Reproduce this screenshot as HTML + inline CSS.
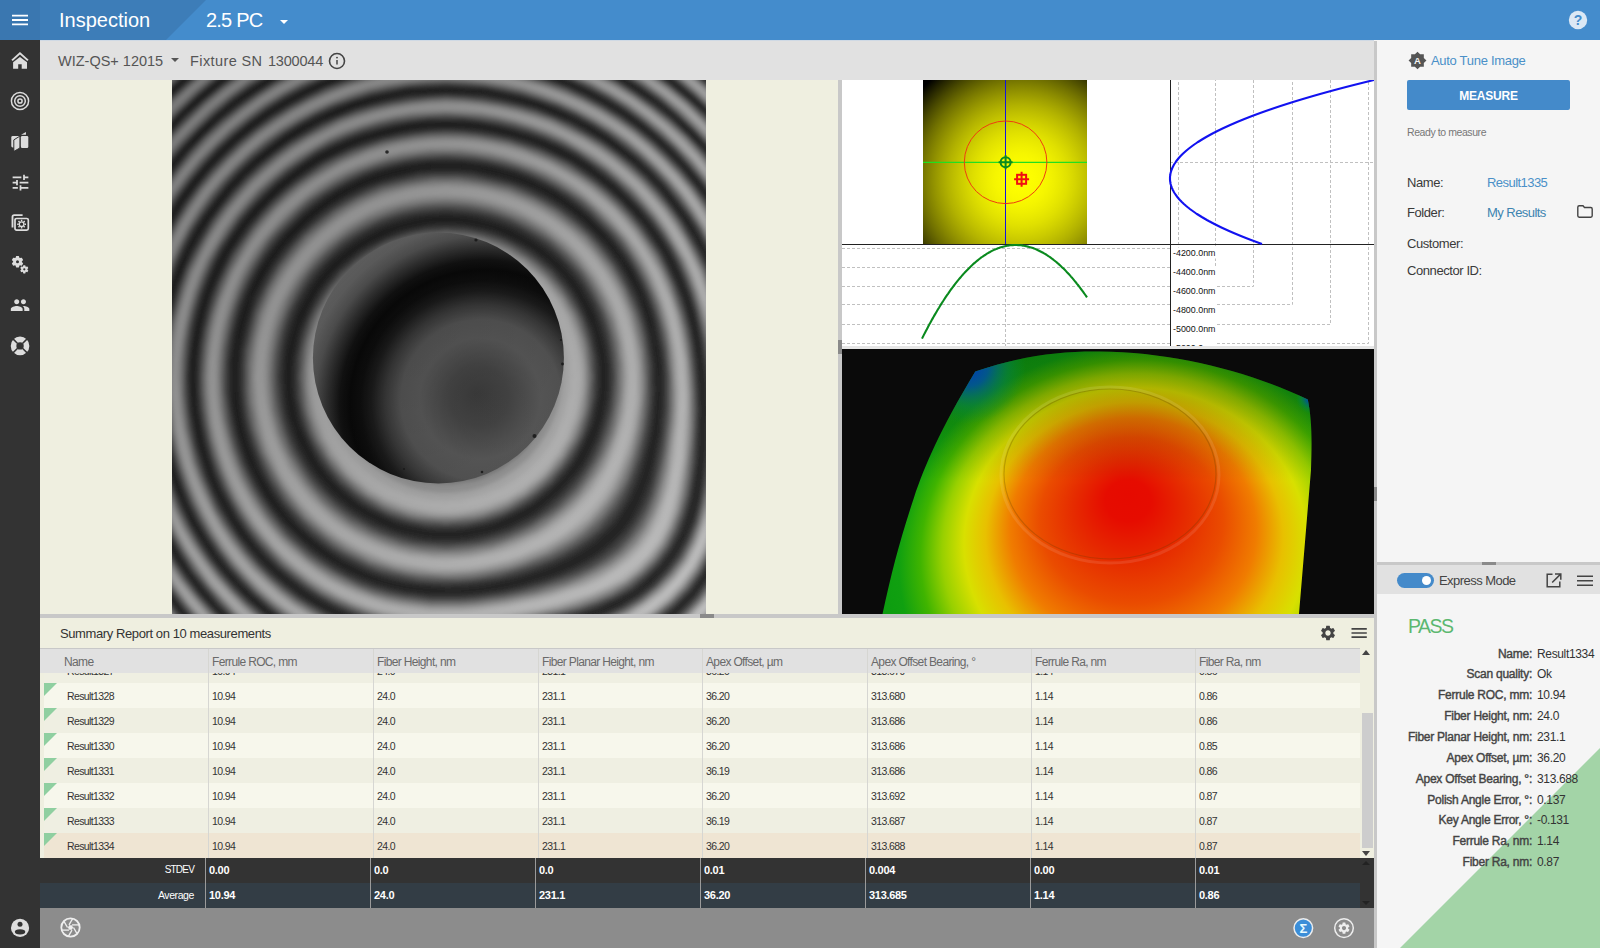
<!DOCTYPE html>
<html lang="en">
<head>
<meta charset="utf-8">
<title>Inspection</title>
<style>
*{box-sizing:border-box;margin:0;padding:0}
html,body{width:1600px;height:948px;overflow:hidden;background:#f5f5f5;font-family:"Liberation Sans",sans-serif;color:#333}
.abs{position:absolute}
.t{position:absolute;white-space:nowrap;line-height:1}
#topbar{position:absolute;left:0;top:0;width:1600px;height:40px;background:#448ccc}
#topbar .dark{position:absolute;left:0;top:0;width:206px;height:40px;background:#3d7db8;clip-path:polygon(0 0,206px 0,166px 40px,0 40px)}
#topbar .burger{position:absolute;left:0;top:0;width:40px;height:40px;background:#3a77b0}
#sidebar{position:absolute;left:0;top:40px;width:40px;height:908px;background:#333}
#toolbar{position:absolute;left:40px;top:40px;width:1334px;height:40px;background:#e1e1e1;border-top:1px solid #cfd9e4}
#leftpane{position:absolute;left:40px;top:80px;width:798px;height:534px;background:#efefe0}
#vsplit1{position:absolute;left:838px;top:80px;width:4px;height:534px;background:#c8c8c8}
#plots{position:absolute;left:842px;top:80px;width:532px;height:266px;background:#fff;overflow:hidden}
#strip{position:absolute;left:842px;top:346px;width:532px;height:3px;background:#e6e6e6}
#view3d{position:absolute;left:842px;top:349px;width:532px;height:265px;background:#0a0a0a;overflow:hidden}
#hsplit1{position:absolute;left:40px;top:614px;width:1334px;height:4px;background:#c8c8c8}
#summary{position:absolute;left:40px;top:618px;width:1334px;height:290px;background:#efefe0;overflow:hidden}
#bottombar{position:absolute;left:40px;top:908px;width:1334px;height:40px;background:#8c8c8c}
#vsplit2{position:absolute;left:1374px;top:41px;width:3px;height:907px;background:#c8c8c8}
#right{position:absolute;left:1377px;top:41px;width:223px;height:907px;background:#f5f5f5;overflow:hidden}
svg{position:absolute;overflow:visible}
.ico{fill:#ddd}
/* table */
.hdr{position:absolute;left:0;top:30px;width:1320px;height:25px;background:#e1e1e1;border-top:1px solid #c8c8c8;z-index:3}
.hdr span{position:absolute;top:7px;font-size:12px;color:#6a6a6a;white-space:nowrap;line-height:1;letter-spacing:-0.65px}
.row{position:absolute;left:4px;width:1316px;height:25px}
.row span{position:absolute;top:8px;font-size:10.5px;color:#333;white-space:nowrap;line-height:1;letter-spacing:-0.62px}
.row i{position:absolute;left:0;top:0;width:0;height:0;border-top:13px solid #8fcfa0;border-right:13px solid transparent}
.ra{background:#f7f7ec}.rb{background:#efefe2}.rs{background:#efe5d3}
.vsep{position:absolute;top:31px;width:1px;height:209px;background:#d6d6d2;z-index:4}
.drow{position:absolute;left:0;width:1334px;height:25px;background:#333}
.drow span{position:absolute;top:7px;font-size:11px;color:#fff;white-space:nowrap;line-height:1}
.drow b{position:absolute;top:7px;font-size:11px;color:#fff;white-space:nowrap;line-height:1;font-weight:bold;letter-spacing:-0.3px}
.dsep{position:absolute;top:240px;width:1px;height:50px;background:#9a9a9a;z-index:4}
/* right */
.lbl{position:absolute;left:30px;font-size:13px;color:#3a3a3a;line-height:1;white-space:nowrap;letter-spacing:-0.42px}
.val{position:absolute;left:110px;font-size:13px;color:#4a90c8;line-height:1;white-space:nowrap;letter-spacing:-0.55px}
.rl{position:absolute;right:68px;font-size:12px;font-weight:normal;-webkit-text-stroke:0.4px #444;color:#444;line-height:1;white-space:nowrap;letter-spacing:-0.25px;z-index:2}
.rv{position:absolute;left:160px;font-size:12px;color:#333;line-height:1;white-space:nowrap;letter-spacing:-0.35px;z-index:2}
</style>
</head>
<body>
<div id="topbar">
  <div class="dark"></div>
  <div class="burger"></div>
  <svg style="left:12px;top:14px" width="16" height="12" viewBox="0 0 16 12"><path d="M0 1.600h16M0 6h16M0 10.400h16" stroke="#fff" stroke-width="1.900" fill="none"/></svg>
  <div class="t" id="tt1" style="left:59px;top:10px;font-size:20px;color:#fff;letter-spacing:0px">Inspection</div>
  <div class="t" id="tt2" style="left:206px;top:10px;font-size:20px;color:#fff;letter-spacing:-0.8px">2.5 PC</div>
  <svg style="left:279.500px;top:20px" width="8" height="4" viewBox="0 0 8 4"><path d="M0 0h8l-4 4z" fill="#fff"/></svg>
  <svg style="left:1568px;top:10px" width="20" height="20" viewBox="0 0 20 20"><circle cx="10" cy="10" r="9.2" fill="#dbe8f5"/><text x="10" y="15" text-anchor="middle" font-family="Liberation Sans, sans-serif" font-weight="bold" font-size="14" fill="#448ccc">?</text></svg>
</div>
<div id="sidebar">
  <!-- home (center y=60 => local 20) -->
  <svg style="left:10px;top:10px" width="20" height="20" viewBox="0 0 20 20" class="ico"><path d="M9.950 1.900 18.600 9.700 17.300 11.100 9.950 4.600 2.700 11.100 1.400 9.700z"/><path d="M9.950 6.900 17 12.300V18.700H11.700V14.300H8.200V18.700H3.100V12.300z"/></svg>
  <!-- target center y=101 => local 61 -->
  <svg style="left:10px;top:51px" width="20" height="20" viewBox="0 0 20 20" fill="none" stroke="#ddd"><circle cx="10" cy="10" r="8.6" stroke-width="1.5"/><circle cx="10" cy="10" r="5.3" stroke-width="1.5"/><circle cx="10" cy="10" r="2.1" stroke-width="1.5"/></svg>
  <!-- book/map center y=141.5 -->
  <svg style="left:10px;top:91px" width="20" height="21" viewBox="0 0 20 21" class="ico"><rect x="10.900" y="5" width="7.400" height="12" rx="1.300"/><path d="M11.100 3.800 15.950 0.900V3.800z"/><rect x="1.300" y="5" width="8.900" height="11.500" rx="1.400"/><path d="M3.800 8.900 9.900 5.100V17L4.500 20 3.800 19.300z" stroke="#333" stroke-width="1"/></svg>
  <!-- sliders center y=182.5 -->
  <svg style="left:9.500px;top:132px" width="21" height="21" viewBox="0 0 24 24" class="ico"><path d="M3 17v2h6v-2H3zM3 5v2h10V5H3zm10 16v-2h8v-2h-8v-2h-2v6h2zM7 9v2H3v2h4v2h2V9H7zm14 4v-2H11v2h10zm-6-4h2V7h4V5h-4V3h-2v6z"/></svg>
  <!-- image settings center y=223 -->
  <svg style="left:10px;top:173px" width="20" height="20" viewBox="0 0 20 20" fill="none" stroke="#ddd"><path d="M2.500 14.600V3.800C2.500 2.800 3.200 2.100 4.200 2.100H12.600" stroke-width="1.850"/><rect x="5" y="5.500" width="13.300" height="11.700" rx="1.600" stroke-width="1.700" fill="#2e2e2e"/><circle cx="11.600" cy="11.200" r="2.300" stroke-width="1.300"/><path d="M14.50 11.20L16.00 11.20M13.65 13.25L14.71 14.31M11.60 14.10L11.60 15.60M9.55 13.25L8.49 14.31M8.70 11.20L7.20 11.20M9.55 9.15L8.49 8.09M11.60 8.30L11.60 6.80M13.65 9.15L14.71 8.09" stroke-width="1.500"/></svg>
  <!-- gears center y=264 -->
  <svg style="left:10px;top:210px" width="20" height="26" viewBox="0 0 20 26" class="ico"><path fill-rule="evenodd" d="M5.45 7.92L6.21 5.94L8.79 5.94L9.55 7.92L9.75 8.03L11.84 7.71L13.13 9.94L11.80 11.59L11.80 11.81L13.13 13.46L11.84 15.69L9.75 15.37L9.55 15.48L8.79 17.46L6.21 17.46L5.45 15.48L5.25 15.37L3.16 15.69L1.87 13.46L3.20 11.81L3.20 11.59L1.87 9.94L3.16 7.71L5.25 8.03ZM6.00 11.70a1.50 1.50 0 1 0 3.00 0a1.50 1.50 0 1 0 -3.00 0Z"/><path fill-rule="evenodd" d="M12.87 16.66L13.38 15.20L15.22 15.20L15.73 16.66L15.87 16.74L17.39 16.46L18.31 18.04L17.30 19.22L17.30 19.38L18.31 20.56L17.39 22.14L15.87 21.86L15.73 21.94L15.22 23.40L13.38 23.40L12.87 21.94L12.73 21.86L11.21 22.14L10.29 20.56L11.30 19.38L11.30 19.22L10.29 18.04L11.21 16.46L12.73 16.74ZM13.20 19.30a1.10 1.10 0 1 0 2.20 0a1.10 1.10 0 1 0 -2.20 0Z"/></svg>
  <!-- people center y=305 -->
  <svg style="left:10px;top:255.100px" width="20.200" height="20.200" viewBox="0 0 24 24" class="ico"><path d="M16 11c1.660 0 2.990-1.340 2.990-3S17.660 5 16 5c-1.660 0-3 1.340-3 3s1.340 3 3 3zm-8 0c1.660 0 2.990-1.340 2.990-3S9.660 5 8 5C6.340 5 5 6.340 5 8s1.340 3 3 3zm0 2c-2.330 0-7 1.170-7 3.500V19h14v-2.500c0-2.330-4.670-3.500-7-3.500zm8 0c-.290 0-.620.020-.970.050 1.160.840 1.970 1.970 1.970 3.450V19h6v-2.500c0-2.330-4.670-3.500-7-3.500z"/></svg>
  <!-- lifebuoy center y=346 -->
  <svg style="left:10px;top:296px" width="20" height="20" viewBox="0 0 20 20" fill="none"><circle cx="10.050" cy="9.900" r="6.500" stroke="#ddd" stroke-width="5.600"/><path d="M3 2.900 7.600 7.500M17.100 2.900 12.500 7.500M3 16.900 7.600 12.300M17.100 16.900 12.500 12.300" stroke="#333" stroke-width="1.500"/></svg>
  <!-- account center y=928 => local 888 -->
  <svg style="left:10px;top:878px" width="20" height="20" viewBox="0 0 20 20"><circle cx="10.050" cy="9.900" r="9.100" fill="#ddd"/><circle cx="10" cy="6.300" r="2.500" fill="#333"/><ellipse cx="10.050" cy="13.800" rx="5.200" ry="2.600" fill="#333"/></svg>
</div>
<div id="toolbar">
  <div class="t" id="tb1" style="left:18px;top:13px;font-size:14.500px;color:#555">WIZ-QS+ 12015</div>
  <svg style="left:131px;top:17px" width="8" height="4" viewBox="0 0 8 4"><path d="M0 0h8l-4 4z" fill="#555"/></svg>
  <div class="t" id="tb2" style="left:150px;top:13px;font-size:14.500px;color:#555;letter-spacing:0.4px">Fixture SN</div>
  <div class="t" id="tb3" style="left:228px;top:12.5px;font-size:14.500px;color:#555;letter-spacing:-0.2px">1300044</div>
  <svg style="left:287.500px;top:10.500px" width="18" height="18" viewBox="0 0 18 18"><circle cx="9" cy="9" r="7.500" fill="none" stroke="#444" stroke-width="1.600"/><path d="M9 8v4.600" stroke="#444" stroke-width="1.500"/><circle cx="9" cy="5.600" r="0.950" fill="#444"/></svg>
</div>
<div id="leftpane"><svg style="left:132px;top:0" width="534" height="534" viewBox="0 0 534 534"><defs><radialGradient id="fi" gradientUnits="userSpaceOnUse" cx="315.5" cy="329.0" r="201.0" fx="305.0" fy="314.0"><stop offset="0.000" stop-color="#414141"/><stop offset="0.147" stop-color="#4a4a4a"/><stop offset="0.300" stop-color="#5e5e5e"/><stop offset="0.400" stop-color="#5a5a5a"/><stop offset="0.480" stop-color="#3e3e3e"/><stop offset="0.553" stop-color="#1e1e1e"/><stop offset="0.613" stop-color="#0f0f0f"/><stop offset="0.667" stop-color="#0a0a0a"/><stop offset="0.720" stop-color="#141414"/><stop offset="0.787" stop-color="#383838"/><stop offset="0.853" stop-color="#5e5e5e"/><stop offset="0.920" stop-color="#727272"/><stop offset="1.000" stop-color="#787878"/></radialGradient><linearGradient id="tilt" x1="0" y1="0" x2="1" y2="1"><stop offset="0" stop-color="#000" stop-opacity="0.36"/><stop offset="0.55" stop-color="#000" stop-opacity="0.14"/><stop offset="1" stop-color="#000" stop-opacity="0"/></linearGradient><filter id="bl" x="0" y="0" width="1" height="1"><feGaussianBlur stdDeviation="2"/></filter><clipPath id="imgc"><rect width="534" height="534"/></clipPath></defs><g clip-path="url(#imgc)"><g filter="url(#bl)"><rect x="-10" y="-10" width="554" height="554" fill="#c0c0c0"/><polygon points="686,297 688,324 689,352 689,379 687,408 685,437 681,466 675,495 667,524 656,552 641,579 624,604 603,626 579,644 552,660 525,673 497,683 468,691 440,698 412,703 384,708 356,711 329,713 301,715 274,715 247,714 219,711 192,707 166,701 139,694 114,684 89,673 65,660 42,645 20,628 -1,611 -20,591 -38,571 -55,549 -69,526 -83,503 -95,479 -105,454 -114,429 -121,403 -126,377 -130,350 -133,324 -133,297 -132,270 -129,244 -125,218 -119,192 -111,166 -101,141 -90,117 -78,94 -64,71 -48,50 -31,29 -13,10 6,-8 27,-25 48,-41 71,-55 94,-67 119,-78 143,-88 169,-95 195,-101 221,-106 247,-108 274,-109 301,-108 327,-106 353,-101 379,-95 405,-88 429,-78 454,-67 477,-55 500,-41 521,-25 542,-8 561,10 579,29 596,50 612,71 626,94 639,117 650,141 659,166 667,192 674,217 679,244 683,270" fill="#b5b5b5"/><polygon points="685,297 687,324 687,351 687,379 686,407 684,436 680,465 674,494 666,523 655,551 640,578 622,603 601,624 577,643 552,659 524,671 496,682 468,690 439,696 411,702 384,706 356,710 329,712 301,713 274,714 247,713 220,710 193,706 166,700 140,692 114,683 89,672 65,658 42,644 21,627 0,609 -19,590 -37,570 -53,548 -68,526 -82,502 -93,478 -104,453 -112,428 -120,402 -125,376 -129,350 -131,324 -132,297 -131,270 -128,244 -123,218 -117,192 -109,167 -100,142 -89,118 -77,95 -63,72 -47,51 -30,30 -12,11 7,-7 28,-24 49,-40 72,-54 95,-66 119,-77 144,-86 169,-94 195,-100 221,-104 248,-107 274,-108 300,-107 327,-104 353,-100 379,-94 404,-86 429,-77 453,-66 476,-54 499,-40 520,-24 541,-7 560,11 578,30 595,51 611,72 625,95 637,118 648,142 658,167 666,192 673,218 678,244 682,270" fill="#9f9f9f"/><polygon points="683,297 685,324 686,351 686,379 684,407 682,436 678,464 672,493 664,522 653,550 639,577 621,601 600,623 576,642 551,657 523,670 495,680 467,688 439,695 411,700 383,705 356,708 328,710 301,712 274,712 247,711 220,709 193,704 166,699 140,691 115,681 90,670 66,657 43,642 21,626 1,608 -18,589 -36,569 -52,547 -67,525 -80,502 -92,478 -102,453 -111,428 -118,402 -124,376 -127,350 -130,323 -130,297 -129,271 -126,244 -122,218 -116,193 -108,167 -99,143 -88,119 -75,95 -61,73 -46,51 -29,31 -11,12 8,-6 28,-23 50,-38 72,-52 96,-65 120,-76 144,-85 170,-93 195,-99 221,-103 248,-106 274,-106 300,-106 327,-103 353,-99 378,-93 404,-85 428,-76 452,-65 476,-52 498,-38 520,-23 540,-6 559,12 577,31 594,51 609,73 623,95 636,119 647,143 657,167 665,192 671,218 677,244 681,270" fill="#828282"/><polygon points="682,297 684,324 684,351 684,379 683,407 681,435 677,464 671,493 663,522 652,549 638,576 620,600 599,622 575,641 550,656 522,669 494,679 466,687 438,694 410,699 383,703 355,707 328,709 301,710 274,711 247,710 220,707 193,703 167,697 141,690 115,680 91,669 67,656 44,641 22,625 2,607 -17,588 -35,568 -51,546 -66,524 -79,501 -91,477 -101,452 -110,427 -117,402 -122,376 -126,350 -128,323 -129,297 -128,271 -125,244 -121,219 -114,193 -107,168 -97,143 -87,119 -74,96 -60,74 -45,52 -28,32 -10,13 9,-5 29,-22 51,-37 73,-51 96,-63 120,-74 145,-84 170,-91 196,-97 222,-101 248,-104 274,-105 300,-104 326,-101 352,-97 378,-91 403,-84 428,-74 452,-63 475,-51 497,-37 519,-22 539,-5 558,13 576,32 593,52 608,74 622,96 635,119 646,143 655,168 663,193 670,218 675,244 679,270" fill="#646464"/><polygon points="680,297 682,324 683,351 683,378 682,406 679,435 675,463 670,492 661,521 650,549 636,575 619,599 598,621 574,639 549,655 521,667 494,677 466,686 438,692 410,697 382,702 355,705 328,708 301,709 274,709 247,708 220,706 194,701 167,696 141,688 116,679 91,668 68,655 45,640 23,624 3,606 -16,587 -34,567 -50,545 -65,523 -78,500 -89,476 -100,452 -108,427 -115,401 -121,376 -125,349 -127,323 -127,297 -126,271 -124,245 -119,219 -113,193 -105,168 -96,144 -85,120 -73,97 -59,74 -44,53 -27,33 -9,14 10,-4 30,-21 52,-36 74,-50 97,-62 121,-73 145,-82 170,-90 196,-96 222,-100 248,-103 274,-103 300,-103 326,-100 352,-96 378,-90 403,-82 427,-73 451,-62 474,-50 496,-36 518,-21 538,-4 557,14 575,33 592,53 607,74 621,97 633,120 644,144 654,168 662,193 668,219 674,244 678,271" fill="#474747"/><polygon points="679,297 681,324 681,351 681,378 680,406 678,434 674,463 668,491 660,520 649,548 635,574 617,598 597,620 573,638 548,653 521,666 493,676 465,684 437,691 409,696 382,700 355,704 328,706 301,707 274,708 247,707 220,704 194,700 168,694 142,687 116,677 92,666 68,653 46,639 24,623 4,605 -15,586 -33,566 -49,545 -63,522 -76,499 -88,476 -98,451 -107,426 -114,401 -119,375 -123,349 -125,323 -126,297 -125,271 -122,245 -118,219 -112,194 -104,169 -95,144 -84,120 -72,97 -58,75 -43,54 -26,34 -8,15 11,-3 31,-20 52,-35 74,-49 98,-61 121,-72 146,-81 171,-88 196,-94 222,-99 248,-101 274,-102 300,-101 326,-99 352,-94 377,-88 402,-81 427,-72 450,-61 474,-49 496,-35 517,-20 537,-3 556,15 574,34 591,54 606,75 620,97 632,120 643,144 652,169 660,193 667,219 672,245 676,271" fill="#313131"/><polygon points="677,297 679,324 680,350 680,378 679,405 676,434 672,462 667,491 659,519 648,547 634,573 616,597 595,618 572,637 547,652 520,665 492,675 464,683 436,689 409,695 382,699 355,702 328,705 301,706 274,706 247,705 221,703 194,699 168,693 142,685 117,676 93,665 69,652 47,637 25,621 5,604 -14,585 -31,565 -47,544 -62,522 -75,499 -87,475 -97,451 -105,426 -112,401 -118,375 -122,349 -124,323 -124,297 -123,271 -121,245 -116,219 -110,194 -103,169 -93,145 -83,121 -70,98 -57,76 -41,55 -25,35 -7,16 12,-2 32,-18 53,-34 75,-47 98,-60 122,-70 146,-79 171,-87 196,-93 222,-97 248,-100 274,-101 300,-100 326,-97 352,-93 377,-87 402,-79 426,-70 450,-60 473,-47 495,-34 516,-18 536,-2 555,16 573,35 589,55 605,76 618,98 631,121 642,145 651,169 659,194 666,219 671,245 675,271" fill="#262626"/><polygon points="676,297 678,323 678,350 678,377 677,405 675,433 671,461 665,490 657,518 646,546 632,572 615,596 594,617 571,636 546,651 519,663 491,673 464,681 436,688 408,693 381,697 354,701 327,703 301,704 274,705 247,704 221,701 194,697 168,691 143,684 118,675 93,663 70,651 47,636 26,620 6,603 -13,584 -30,564 -46,543 -61,521 -74,498 -85,474 -96,450 -104,425 -111,400 -116,375 -120,349 -122,323 -123,297 -122,271 -119,245 -115,220 -109,194 -101,170 -92,145 -81,122 -69,99 -55,77 -40,56 -24,36 -6,17 13,-1 33,-17 54,-32 76,-46 99,-58 122,-69 147,-78 171,-86 197,-91 222,-96 248,-98 274,-99 300,-98 326,-96 351,-91 377,-86 401,-78 426,-69 449,-58 472,-46 494,-32 515,-17 535,-1 554,17 572,36 588,56 603,77 617,99 629,122 640,145 650,169 658,194 664,219 669,245 673,271" fill="#262626"/><polygon points="674,297 676,323 677,350 677,377 676,405 673,433 669,461 664,489 656,517 645,545 631,571 614,595 593,616 570,634 545,650 518,662 490,672 463,680 435,686 408,692 381,696 354,699 327,702 301,703 274,703 247,702 221,700 195,696 169,690 143,682 118,673 94,662 71,649 48,635 27,619 7,602 -12,583 -29,563 -45,542 -60,520 -73,497 -84,474 -94,450 -103,425 -110,400 -115,374 -119,349 -121,323 -121,297 -120,271 -118,245 -113,220 -107,195 -100,170 -91,146 -80,122 -68,100 -54,78 -39,57 -23,37 -5,18 14,0 34,-16 55,-31 77,-45 99,-57 123,-68 147,-77 172,-84 197,-90 222,-94 248,-97 274,-98 300,-97 326,-94 351,-90 376,-84 401,-77 425,-68 449,-57 471,-45 493,-31 514,-16 534,0 553,18 571,37 587,57 602,78 616,100 628,122 639,146 648,170 656,195 663,220 668,245 672,271" fill="#313131"/><polygon points="673,297 675,323 675,350 675,377 674,404 672,432 668,460 662,488 654,517 644,544 630,570 612,594 592,615 569,633 544,648 517,661 490,670 462,678 435,685 407,690 380,694 354,698 327,700 301,701 274,702 248,701 221,698 195,694 169,688 144,681 119,672 95,661 71,648 49,634 28,618 8,600 -11,582 -28,562 -44,541 -58,519 -71,496 -83,473 -93,449 -101,424 -108,399 -114,374 -117,349 -119,323 -120,297 -119,271 -116,246 -112,220 -106,195 -98,171 -89,147 -79,123 -67,100 -53,79 -38,58 -22,38 -4,19 15,1 35,-15 56,-30 77,-43 100,-56 124,-66 148,-75 172,-83 197,-89 223,-93 248,-95 274,-96 300,-95 325,-93 351,-89 376,-83 400,-75 424,-66 448,-56 471,-43 492,-30 513,-15 533,1 552,19 570,38 586,58 601,79 615,100 627,123 638,146 647,170 655,195 661,220 666,245 670,271" fill="#474747"/><polygon points="671,297 673,323 674,350 674,377 673,404 670,431 666,460 661,488 653,516 642,543 628,569 611,593 591,614 568,632 542,647 516,659 489,669 461,677 434,683 407,689 380,693 353,696 327,698 300,700 274,700 248,699 221,697 195,693 170,687 144,679 119,670 95,659 72,647 50,632 29,617 9,599 -10,581 -27,561 -43,540 -57,518 -70,496 -81,472 -91,448 -100,424 -107,399 -112,374 -116,348 -118,323 -119,297 -117,271 -115,246 -110,221 -105,196 -97,171 -88,147 -77,124 -65,101 -52,79 -37,59 -20,39 -3,20 16,3 36,-14 56,-29 78,-42 101,-54 124,-65 148,-74 173,-81 198,-87 223,-91 248,-94 274,-95 300,-94 325,-91 350,-87 375,-81 400,-74 424,-65 447,-54 470,-42 492,-29 512,-14 532,3 551,20 568,39 585,59 600,79 613,101 625,124 636,147 645,171 653,195 660,220 665,246 669,271" fill="#646464"/><polygon points="670,297 672,323 672,349 672,376 671,403 669,431 665,459 659,487 651,515 641,542 627,568 610,591 590,613 567,631 541,646 515,658 488,668 461,676 433,682 406,687 380,691 353,695 327,697 300,698 274,699 248,698 222,695 196,691 170,685 145,678 120,669 96,658 73,645 51,631 30,615 10,598 -9,580 -26,560 -42,539 -56,517 -69,495 -80,472 -90,448 -98,423 -105,399 -111,373 -114,348 -116,323 -117,297 -116,271 -113,246 -109,221 -103,196 -96,172 -87,148 -76,124 -64,102 -50,80 -36,59 -19,40 -2,21 17,4 36,-13 57,-27 79,-41 101,-53 125,-63 149,-72 173,-80 198,-86 223,-90 248,-92 274,-93 300,-92 325,-90 350,-86 375,-80 399,-72 423,-63 447,-53 469,-41 491,-27 512,-13 531,4 550,21 567,40 584,59 598,80 612,102 624,124 635,148 644,171 652,196 658,221 663,246 667,271" fill="#828282"/><polygon points="668,297 670,323 671,349 671,376 670,403 667,430 663,458 658,486 650,514 639,541 626,567 609,590 588,611 565,629 540,644 514,656 487,666 460,674 433,680 406,686 379,690 353,693 326,695 300,697 274,697 248,696 222,694 196,690 170,684 145,677 121,667 97,657 74,644 52,630 31,614 11,597 -7,578 -25,559 -40,538 -55,517 -67,494 -79,471 -89,447 -97,423 -104,398 -109,373 -113,348 -115,322 -116,297 -114,272 -112,246 -108,221 -102,196 -94,172 -85,148 -75,125 -63,103 -49,81 -34,60 -18,41 -1,22 18,5 37,-11 58,-26 80,-40 102,-52 125,-62 149,-71 173,-78 198,-84 223,-88 249,-91 274,-92 299,-91 325,-88 350,-84 375,-78 399,-71 423,-62 446,-52 468,-40 490,-26 511,-11 530,5 549,22 566,41 582,60 597,81 611,103 623,125 633,148 643,172 650,196 657,221 662,246 666,271" fill="#9f9f9f"/><polygon points="667,297 669,323 669,349 669,376 668,403 666,430 662,458 656,486 649,513 638,540 624,566 607,589 587,610 564,628 539,643 513,655 486,665 459,673 432,679 405,684 379,688 352,692 326,694 300,695 274,695 248,694 222,692 196,688 171,682 146,675 121,666 97,655 74,643 52,629 32,613 12,596 -6,577 -23,558 -39,537 -53,516 -66,493 -77,470 -87,447 -96,422 -102,398 -108,373 -111,348 -113,322 -114,297 -113,272 -110,246 -106,221 -100,197 -93,172 -84,149 -73,126 -61,103 -48,82 -33,61 -17,42 0,23 19,6 38,-10 59,-25 80,-38 103,-50 126,-61 150,-70 174,-77 198,-83 223,-87 249,-89 274,-90 299,-89 325,-87 350,-83 374,-77 398,-70 422,-61 445,-50 468,-38 489,-25 510,-10 529,6 548,23 565,42 581,61 596,82 609,103 621,126 632,149 641,172 649,197 655,221 660,246 664,271" fill="#b5b5b5"/><polygon points="665,297 667,323 668,349 668,375 666,402 664,429 660,457 655,485 647,512 637,539 623,565 606,588 586,609 563,627 538,642 512,654 486,663 459,671 432,678 405,683 378,687 352,690 326,692 300,694 274,694 248,693 222,690 197,687 171,681 146,674 122,665 98,654 75,641 53,627 33,612 13,595 -5,576 -22,557 -38,536 -52,515 -65,493 -76,470 -86,446 -94,422 -101,397 -106,373 -110,348 -112,322 -113,297 -111,272 -109,247 -105,222 -99,197 -91,173 -82,149 -72,126 -60,104 -47,83 -32,62 -16,43 1,24 20,7 39,-9 60,-24 81,-37 103,-49 126,-59 150,-68 174,-76 199,-81 224,-85 249,-88 274,-89 299,-88 324,-85 349,-81 374,-76 398,-68 422,-59 445,-49 467,-37 488,-24 509,-9 528,7 547,24 564,43 580,62 595,83 608,104 620,126 631,149 640,173 647,197 654,221 659,246 663,272" fill="#c0c0c0"/><polygon points="664,297 666,323 666,349 666,375 665,402 663,429 659,456 653,484 646,512 635,538 622,564 605,587 585,608 562,625 537,640 511,652 485,662 458,670 431,676 404,681 378,685 352,688 326,691 300,692 274,692 248,691 222,689 197,685 172,679 147,672 122,663 99,652 76,640 54,626 33,610 14,593 -4,575 -21,556 -37,535 -51,514 -63,492 -75,469 -84,445 -93,421 -99,397 -105,372 -108,347 -110,322 -111,297 -110,272 -107,247 -103,222 -97,198 -90,173 -81,150 -71,127 -59,105 -45,84 -31,63 -15,44 2,25 21,8 40,-8 61,-22 82,-36 104,-48 127,-58 151,-67 175,-74 199,-80 224,-84 249,-86 274,-87 299,-86 324,-84 349,-80 373,-74 397,-67 421,-58 444,-48 466,-36 487,-22 508,-8 527,8 546,25 563,44 579,63 593,84 607,105 619,127 629,150 638,173 646,197 652,222 657,247 661,272" fill="#c0c0c0"/><polygon points="662,297 664,323 665,348 665,375 663,401 661,428 657,456 652,483 644,511 634,537 620,563 603,586 583,606 561,624 536,639 510,651 484,661 457,668 430,675 404,680 378,684 352,687 326,689 300,691 274,691 248,690 223,687 197,683 172,678 147,671 123,662 99,651 77,639 55,625 34,609 15,592 -3,574 -20,555 -35,534 -49,513 -62,491 -73,468 -83,445 -91,421 -98,397 -103,372 -107,347 -109,322 -109,297 -108,272 -106,247 -102,222 -96,198 -88,174 -80,151 -69,128 -57,106 -44,84 -30,64 -14,45 3,26 22,9 41,-7 61,-21 83,-34 105,-46 128,-57 151,-65 175,-73 199,-78 224,-82 249,-85 274,-86 299,-85 324,-82 349,-78 373,-73 397,-65 420,-57 443,-46 465,-34 487,-21 507,-7 526,9 545,26 562,45 578,64 592,84 605,106 617,128 628,150 637,174 645,198 651,222 656,247 660,272" fill="#b5b5b5"/><polygon points="661,297 662,322 663,348 663,374 662,401 660,428 656,455 650,483 643,510 632,536 619,562 602,585 582,605 560,623 535,637 509,649 483,659 456,667 430,673 403,678 377,682 351,685 325,688 300,689 274,689 248,688 223,686 197,682 172,676 148,669 124,660 100,650 78,637 56,623 35,608 16,591 -2,573 -19,554 -34,533 -48,512 -61,490 -72,468 -82,444 -90,420 -96,396 -102,372 -105,347 -107,322 -108,297 -107,272 -104,247 -100,223 -94,198 -87,174 -78,151 -68,128 -56,106 -43,85 -28,65 -13,46 5,28 23,10 42,-5 62,-20 83,-33 105,-45 128,-55 151,-64 175,-71 200,-77 224,-81 249,-83 274,-84 299,-83 324,-81 348,-77 373,-71 397,-64 420,-55 443,-45 465,-33 486,-20 506,-5 525,10 543,28 561,46 576,65 591,85 604,106 616,128 626,151 635,174 643,198 649,222 654,247 658,272" fill="#9f9f9f"/><polygon points="659,297 661,322 662,348 661,374 660,400 658,427 654,455 649,482 641,509 631,535 617,560 601,583 581,604 559,621 534,636 509,648 482,658 456,665 429,672 403,677 377,681 351,684 325,686 300,687 274,688 248,687 223,684 198,680 173,675 148,668 124,659 101,648 78,636 57,622 36,607 17,590 -1,572 -18,553 -33,533 -47,511 -59,489 -71,467 -80,444 -88,420 -95,396 -100,371 -104,347 -106,322 -106,297 -105,272 -103,247 -99,223 -93,199 -86,175 -77,152 -66,129 -55,107 -42,86 -27,66 -11,47 6,29 24,12 43,-4 63,-19 84,-32 106,-43 129,-54 152,-62 176,-70 200,-75 224,-79 249,-82 274,-83 299,-82 324,-79 348,-75 372,-70 396,-62 419,-54 442,-43 464,-32 485,-19 505,-4 524,12 542,29 559,47 575,66 590,86 603,107 615,129 625,152 634,175 642,199 648,223 653,247 657,272" fill="#828282"/><polygon points="658,297 659,322 660,348 660,374 659,400 656,427 653,454 647,481 640,508 629,534 616,559 599,582 580,603 557,620 533,635 508,647 481,656 455,664 428,670 402,675 376,679 351,682 325,685 299,686 274,686 249,685 223,683 198,679 173,673 149,666 125,657 102,647 79,635 58,621 37,605 18,589 0,571 -16,552 -32,532 -46,511 -58,489 -69,466 -79,443 -87,419 -93,395 -99,371 -102,347 -104,322 -105,297 -104,272 -101,248 -97,223 -91,199 -84,175 -75,152 -65,130 -53,108 -40,87 -26,67 -10,48 7,30 25,13 44,-3 64,-17 85,-30 107,-42 129,-52 152,-61 176,-68 200,-74 225,-78 249,-80 274,-81 299,-80 323,-78 348,-74 372,-68 396,-61 419,-52 441,-42 463,-30 484,-17 504,-3 523,13 541,30 558,48 574,67 588,87 601,108 613,130 624,152 633,175 640,199 646,223 651,247 655,272" fill="#646464"/><polygon points="656,297 658,322 658,348 658,373 657,400 655,426 651,453 646,480 638,507 628,533 615,558 598,581 578,601 556,619 532,633 507,645 481,655 454,662 428,668 402,673 376,677 350,681 325,683 299,684 274,684 249,683 223,681 198,677 174,672 149,665 125,656 102,645 80,633 59,619 38,604 19,588 1,570 -15,551 -30,531 -44,510 -57,488 -68,466 -77,443 -85,419 -92,395 -97,371 -101,346 -103,322 -103,297 -102,272 -100,248 -96,223 -90,199 -83,176 -74,153 -64,130 -52,109 -39,88 -25,68 -9,49 8,31 26,14 45,-2 65,-16 86,-29 107,-41 130,-51 153,-60 177,-67 201,-72 225,-76 249,-79 274,-80 299,-79 323,-76 347,-72 371,-67 395,-60 418,-51 441,-41 462,-29 483,-16 503,-2 522,14 540,31 557,49 573,68 587,88 600,109 612,130 622,153 631,176 639,199 645,223 650,248 653,272" fill="#474747"/><polygon points="654,297 656,322 657,347 657,373 656,399 653,426 650,453 644,480 637,506 626,533 613,557 597,580 577,600 555,618 531,632 506,644 480,653 453,661 427,667 401,672 376,676 350,679 325,681 299,683 274,683 249,682 224,680 199,676 174,670 150,663 126,654 103,644 81,632 59,618 39,603 20,586 2,569 -14,550 -29,530 -43,509 -55,487 -66,465 -76,442 -84,418 -90,395 -96,371 -99,346 -101,322 -102,297 -101,272 -98,248 -94,224 -88,200 -81,176 -73,153 -62,131 -51,110 -38,89 -23,69 -8,50 9,32 27,15 46,-0 66,-15 87,-28 108,-39 131,-49 153,-58 177,-65 201,-71 225,-75 249,-77 274,-78 299,-77 323,-75 347,-71 371,-65 395,-58 417,-49 440,-39 461,-28 482,-15 502,-0 521,15 539,32 556,50 571,69 586,89 599,109 610,131 621,153 630,176 637,200 643,224 648,248 652,272" fill="#313131"/><polygon points="653,297 655,322 655,347 655,373 654,399 652,425 648,452 643,479 635,506 625,532 612,556 595,579 576,599 554,616 530,631 505,642 479,652 453,659 427,665 401,670 375,674 350,677 324,680 299,681 274,681 249,680 224,678 199,674 174,669 150,662 127,653 104,642 82,630 60,617 40,602 21,585 4,567 -13,549 -28,529 -42,508 -54,486 -65,464 -74,441 -82,418 -89,394 -94,370 -98,346 -100,321 -100,297 -99,273 -97,248 -93,224 -87,200 -80,177 -71,154 -61,132 -49,110 -36,90 -22,70 -7,51 10,33 28,16 47,1 67,-13 87,-26 109,-38 131,-48 154,-57 177,-64 201,-69 225,-73 250,-76 274,-76 298,-76 323,-73 347,-69 371,-64 394,-57 417,-48 439,-38 461,-26 481,-13 501,1 520,16 538,33 555,51 570,70 585,90 597,110 609,132 619,154 628,177 636,200 642,224 647,248 650,272" fill="#262626"/><polygon points="651,297 653,322 654,347 653,372 652,398 650,425 647,451 641,478 634,505 624,531 610,555 594,578 575,598 553,615 529,629 504,641 478,650 452,658 426,664 400,669 375,673 349,676 324,678 299,679 274,680 249,679 224,676 199,673 175,667 151,660 127,651 104,641 82,629 61,615 41,600 22,584 5,566 -12,548 -27,528 -40,507 -53,486 -63,463 -73,441 -81,417 -87,394 -93,370 -96,346 -98,321 -99,297 -98,273 -95,248 -91,224 -85,201 -78,177 -70,155 -60,133 -48,111 -35,90 -21,71 -6,52 11,34 29,17 48,2 67,-12 88,-25 110,-36 132,-47 154,-55 178,-62 201,-68 225,-72 250,-74 274,-75 298,-74 323,-72 347,-68 370,-62 394,-55 416,-47 438,-36 460,-25 481,-12 500,2 519,17 537,34 554,52 569,71 583,90 596,111 608,132 618,155 627,177 634,201 640,224 645,248 649,272" fill="#262626"/><polygon points="650,297 651,322 652,347 652,372 651,398 649,424 645,451 640,477 632,504 622,530 609,554 593,576 573,596 552,614 528,628 503,639 477,649 451,656 425,662 400,667 374,671 349,674 324,677 299,678 274,678 249,677 224,675 200,671 175,666 151,659 128,650 105,640 83,628 62,614 42,599 23,583 6,565 -10,546 -25,527 -39,506 -51,485 -62,463 -71,440 -79,417 -86,393 -91,370 -95,346 -97,321 -97,297 -96,273 -94,249 -89,225 -84,201 -77,178 -68,155 -58,133 -47,112 -34,91 -20,72 -4,53 12,35 30,19 49,3 68,-11 89,-24 110,-35 132,-45 155,-54 178,-61 202,-66 226,-70 250,-72 274,-73 298,-72 322,-70 346,-66 370,-61 393,-54 416,-45 438,-35 459,-24 480,-11 499,3 518,19 536,35 552,53 568,72 582,91 595,112 606,133 616,155 625,178 633,201 639,224 643,248 647,273" fill="#313131"/><polygon points="648,297 650,322 650,347 650,372 649,398 647,424 643,450 638,477 631,503 621,529 608,553 591,575 572,595 550,612 527,626 502,638 476,647 450,655 425,661 399,666 374,670 349,673 324,675 299,676 274,676 249,675 224,673 200,669 176,664 152,657 128,648 106,638 84,626 63,613 43,598 24,582 7,564 -9,545 -24,526 -38,505 -50,484 -61,462 -70,439 -78,416 -84,393 -89,369 -93,345 -95,321 -95,297 -94,273 -92,249 -88,225 -82,202 -75,178 -67,156 -57,134 -45,113 -33,92 -19,73 -3,54 13,36 31,20 50,4 69,-10 90,-22 111,-34 133,-44 155,-52 179,-59 202,-65 226,-69 250,-71 274,-72 298,-71 322,-69 346,-65 369,-59 393,-52 415,-44 437,-34 458,-22 479,-10 498,4 517,20 535,36 551,54 567,73 581,92 593,113 605,134 615,156 624,178 631,201 637,225 642,249 646,273" fill="#474747"/><polygon points="647,297 648,322 649,346 649,372 648,397 645,423 642,449 637,476 629,502 619,528 606,552 590,574 571,594 549,611 526,625 501,636 475,646 450,653 424,659 399,664 373,668 348,671 324,673 299,675 274,675 249,674 225,672 200,668 176,662 152,656 129,647 107,637 85,625 64,611 44,597 26,580 8,563 -8,544 -23,525 -36,504 -48,483 -59,461 -69,439 -76,416 -83,393 -88,369 -91,345 -93,321 -94,297 -93,273 -90,249 -86,225 -81,202 -74,179 -65,156 -55,135 -44,113 -31,93 -17,74 -2,55 14,37 32,21 51,6 70,-8 90,-21 112,-32 134,-42 156,-51 179,-58 202,-63 226,-67 250,-69 274,-70 298,-69 322,-67 346,-63 369,-58 392,-51 414,-42 436,-32 458,-21 478,-8 497,6 516,21 534,37 550,55 565,74 579,93 592,113 603,135 613,156 622,179 629,202 636,225 640,249 644,273" fill="#646464"/><polygon points="645,297 647,321 647,346 647,371 646,397 644,423 640,449 635,475 628,501 618,527 605,551 589,573 570,593 548,609 525,624 500,635 474,644 449,652 423,658 398,662 373,666 348,669 323,672 299,673 274,673 249,672 225,670 201,666 177,661 153,654 130,645 107,635 86,623 65,610 45,595 27,579 9,562 -7,543 -22,524 -35,503 -47,482 -58,461 -67,438 -75,415 -81,392 -86,369 -90,345 -92,321 -92,297 -91,273 -89,249 -85,226 -79,202 -72,179 -64,157 -54,135 -43,114 -30,94 -16,74 -1,56 16,39 33,22 51,7 71,-7 91,-20 112,-31 134,-41 157,-49 179,-56 203,-62 226,-65 250,-68 274,-69 298,-68 322,-65 345,-62 369,-56 391,-49 414,-41 436,-31 457,-20 477,-7 497,7 515,22 532,39 549,56 564,74 578,94 591,114 602,135 612,157 621,179 628,202 634,225 639,249 642,273" fill="#828282"/><polygon points="643,297 645,321 646,346 645,371 644,396 642,422 639,448 633,474 626,500 616,526 603,550 587,572 568,591 547,608 523,622 499,634 474,643 448,650 423,656 398,661 373,665 348,668 323,670 299,671 274,672 250,671 225,668 201,665 177,659 153,652 130,644 108,634 86,622 66,609 46,594 28,578 10,561 -6,542 -20,523 -34,503 -46,482 -56,460 -66,438 -73,415 -80,392 -85,368 -88,345 -90,321 -91,297 -90,273 -87,249 -83,226 -78,203 -71,180 -62,158 -52,136 -41,115 -29,95 -15,75 0,57 17,40 34,23 52,8 72,-6 92,-18 113,-29 135,-39 157,-48 180,-55 203,-60 226,-64 250,-66 274,-67 298,-66 322,-64 345,-60 368,-55 391,-48 413,-39 435,-29 456,-18 476,-6 496,8 514,23 531,40 548,57 563,75 577,95 589,115 601,136 611,158 619,180 626,203 632,226 637,249 641,273" fill="#9f9f9f"/><polygon points="642,297 643,321 644,346 644,371 643,396 641,421 637,447 632,473 625,499 615,525 602,548 586,570 567,590 546,607 522,621 498,632 473,641 447,649 422,654 397,659 372,663 347,666 323,668 298,670 274,670 250,669 225,667 201,663 177,658 154,651 131,642 109,632 87,621 67,607 47,593 29,577 12,559 -4,541 -19,522 -32,502 -44,481 -55,459 -64,437 -72,414 -78,391 -83,368 -87,344 -89,321 -89,297 -88,273 -86,250 -82,226 -76,203 -69,180 -61,158 -51,137 -40,116 -27,96 -13,76 2,58 18,41 35,25 53,10 73,-4 93,-17 114,-28 135,-38 158,-46 180,-53 203,-58 227,-62 250,-65 274,-65 298,-65 321,-62 345,-58 368,-53 390,-46 413,-38 434,-28 455,-17 475,-4 495,10 513,25 530,41 546,58 561,76 575,96 588,116 599,137 609,158 618,180 625,203 631,226 636,249 639,273" fill="#b5b5b5"/><polygon points="640,297 642,321 642,345 642,370 641,395 639,421 635,447 630,473 623,498 613,524 600,547 584,569 566,589 544,605 521,619 497,631 472,640 447,647 421,653 396,658 372,662 347,665 323,667 298,668 274,668 250,667 226,665 202,661 178,656 154,649 132,641 109,631 88,619 68,606 48,591 30,575 13,558 -3,540 -18,521 -31,501 -43,480 -53,458 -63,436 -70,414 -77,391 -82,368 -85,344 -87,321 -87,297 -87,273 -84,250 -80,227 -75,204 -68,181 -59,159 -50,137 -38,117 -26,97 -12,77 3,59 19,42 36,26 54,11 74,-3 94,-15 114,-27 136,-36 158,-45 181,-51 204,-57 227,-61 250,-63 274,-64 298,-63 321,-61 344,-57 367,-51 390,-45 412,-36 434,-27 454,-15 474,-3 494,11 512,26 529,42 545,59 560,77 574,97 586,117 598,137 608,159 616,181 623,203 629,226 634,250 638,273" fill="#c0c0c0"/><polygon points="638,297 640,321 641,345 640,370 639,395 637,420 634,446 629,472 621,498 612,523 599,546 583,568 564,587 543,604 520,618 496,629 471,638 446,645 421,651 396,656 371,660 347,663 322,665 298,666 274,667 250,666 226,663 202,660 178,654 155,648 132,639 110,629 89,618 69,605 49,590 31,574 14,557 -2,539 -16,520 -30,500 -41,479 -52,458 -61,436 -69,413 -75,391 -80,367 -83,344 -85,321 -86,297 -85,273 -82,250 -78,227 -73,204 -66,182 -58,160 -48,138 -37,117 -25,97 -11,78 4,60 20,43 37,27 55,12 74,-2 94,-14 115,-25 137,-35 159,-43 181,-50 204,-55 227,-59 251,-61 274,-62 297,-61 321,-59 344,-55 367,-50 389,-43 411,-35 433,-25 454,-14 474,-2 493,12 511,27 528,43 544,60 559,78 573,97 585,117 596,138 606,159 615,181 622,204 628,227 632,250 636,273" fill="#c0c0c0"/><polygon points="637,297 638,321 639,345 639,370 638,394 636,420 632,445 627,471 620,497 610,522 597,545 582,567 563,586 542,603 519,616 495,628 470,637 445,644 420,650 395,654 371,658 346,661 322,663 298,665 274,665 250,664 226,662 202,658 179,653 156,646 133,638 111,628 90,616 69,603 50,589 32,573 15,556 -1,538 -15,519 -28,499 -40,478 -50,457 -60,435 -67,413 -73,390 -78,367 -82,344 -84,320 -84,297 -83,274 -81,250 -77,227 -71,204 -65,182 -56,160 -47,139 -36,118 -23,98 -10,79 5,61 21,44 38,28 56,13 75,-0 95,-13 116,-24 137,-33 159,-42 181,-48 204,-54 227,-57 251,-60 274,-60 297,-60 321,-57 344,-54 367,-48 389,-42 411,-33 432,-24 453,-13 473,-0 492,13 510,28 527,44 543,61 558,79 571,98 584,118 595,139 605,160 613,182 620,204 626,227 631,250 634,273" fill="#b5b5b5"/><polygon points="635,297 637,321 637,345 637,369 636,394 634,419 631,445 625,470 618,496 609,521 596,544 580,566 562,585 541,601 518,615 494,626 469,635 444,642 419,648 395,653 370,657 346,660 322,662 298,663 274,663 250,662 226,660 203,656 179,651 156,644 134,636 112,626 91,615 70,602 51,587 33,572 16,555 1,537 -14,518 -27,498 -39,477 -49,456 -58,435 -66,412 -72,390 -77,367 -80,344 -82,320 -83,297 -82,274 -79,251 -75,228 -70,205 -63,183 -55,161 -45,140 -34,119 -22,99 -8,80 6,62 22,45 39,29 57,15 76,1 96,-11 117,-22 138,-32 160,-40 182,-47 205,-52 228,-56 251,-58 274,-59 297,-58 320,-56 343,-52 366,-47 388,-40 410,-32 431,-22 452,-11 472,1 491,15 509,29 526,45 542,62 556,80 570,99 582,119 593,140 603,161 611,182 619,205 624,227 629,250 633,273" fill="#9f9f9f"/><polygon points="633,297 635,321 636,345 635,369 634,394 632,419 629,444 624,470 617,495 607,519 594,543 579,564 560,583 540,600 517,613 493,625 468,633 443,641 419,646 394,651 370,655 346,658 322,660 298,661 274,662 250,661 226,658 203,655 180,650 157,643 134,635 112,625 91,613 71,600 52,586 34,570 17,554 2,536 -12,517 -25,497 -37,477 -47,456 -56,434 -64,412 -70,389 -75,366 -79,343 -80,320 -81,297 -80,274 -78,251 -74,228 -68,205 -62,183 -53,161 -44,140 -33,120 -21,100 -7,81 8,63 24,47 40,31 58,16 77,2 97,-10 117,-21 138,-30 160,-38 182,-45 205,-50 228,-54 251,-56 274,-57 297,-56 320,-54 343,-50 366,-45 388,-38 410,-30 431,-21 451,-10 471,2 490,16 508,31 524,47 540,63 555,81 569,100 581,120 592,140 602,161 610,183 617,205 623,228 627,250 631,274" fill="#828282"/><polygon points="632,297 633,321 634,344 634,369 633,393 631,418 627,443 622,469 615,494 605,518 593,542 577,563 559,582 538,598 516,612 492,623 467,632 443,639 418,645 394,650 369,653 345,656 322,658 298,660 274,660 250,659 227,657 203,653 180,648 157,641 135,633 113,623 92,612 72,599 53,585 35,569 19,552 3,535 -11,516 -24,496 -36,476 -46,455 -55,433 -63,411 -69,389 -73,366 -77,343 -79,320 -79,297 -78,274 -76,251 -72,228 -67,206 -60,184 -52,162 -42,141 -31,121 -19,101 -6,82 9,65 25,48 42,32 59,17 78,4 98,-8 118,-19 139,-29 161,-37 183,-44 205,-49 228,-53 251,-55 274,-56 297,-55 320,-53 343,-49 365,-44 387,-37 409,-29 430,-19 450,-8 470,4 489,17 506,32 523,48 539,65 554,82 567,101 579,121 590,141 600,162 608,184 615,206 621,228 626,251 629,274" fill="#646464"/><polygon points="630,297 632,320 632,344 632,368 631,393 629,417 626,443 621,468 613,493 604,517 591,541 576,562 558,581 537,597 515,610 491,621 466,630 442,637 417,643 393,648 369,652 345,655 321,657 298,658 274,658 250,657 227,655 204,651 180,646 158,640 135,631 114,622 93,610 73,597 54,583 37,568 20,551 4,533 -10,515 -23,495 -34,475 -44,454 -53,433 -61,411 -67,388 -72,366 -75,343 -77,320 -78,297 -77,274 -74,251 -70,228 -65,206 -58,184 -50,163 -41,142 -30,122 -18,102 -4,83 10,66 26,49 43,33 60,19 79,5 99,-7 119,-18 140,-27 161,-35 183,-42 206,-47 228,-51 251,-53 274,-54 297,-53 320,-51 342,-47 365,-42 387,-35 408,-27 429,-18 449,-7 469,5 488,19 505,33 522,49 538,66 552,83 566,102 578,122 589,142 598,163 607,184 614,206 620,228 624,251 628,274" fill="#474747"/><polygon points="628,297 630,320 631,344 630,368 629,392 627,417 624,442 619,467 612,492 602,516 590,539 575,561 556,579 536,596 513,609 490,620 466,629 441,636 417,642 393,646 369,650 345,653 321,655 298,656 274,656 251,655 227,653 204,650 181,645 158,638 136,630 115,620 94,609 74,596 55,582 38,567 21,550 6,532 -8,514 -21,494 -33,474 -43,453 -52,432 -59,410 -65,388 -70,365 -74,343 -75,320 -76,297 -75,274 -73,251 -69,229 -64,207 -57,185 -49,163 -39,143 -28,122 -16,103 -3,84 11,67 27,50 44,34 61,20 80,7 99,-5 120,-16 140,-26 162,-34 184,-40 206,-46 228,-49 251,-51 274,-52 297,-51 320,-49 342,-46 364,-40 386,-34 408,-26 428,-16 449,-5 468,7 487,20 504,34 521,50 537,67 551,84 564,103 577,122 587,142 597,163 605,185 612,206 618,229 622,251 626,274" fill="#313131"/><polygon points="627,297 628,320 629,344 629,368 628,392 626,416 622,441 617,466 610,491 601,515 588,538 573,559 555,578 535,594 512,607 489,618 465,627 440,634 416,640 392,645 368,648 344,651 321,653 297,654 274,655 251,654 227,652 204,648 181,643 159,636 137,628 115,619 95,607 75,595 56,581 39,565 22,549 7,531 -7,513 -20,493 -31,473 -41,453 -50,431 -58,410 -64,388 -69,365 -72,343 -74,320 -74,297 -73,274 -71,252 -67,229 -62,207 -55,185 -47,164 -38,143 -27,123 -15,104 -2,85 13,68 28,51 45,36 62,21 81,8 100,-4 120,-15 141,-24 162,-32 184,-39 206,-44 229,-48 251,-50 274,-51 297,-50 319,-48 342,-44 364,-39 386,-32 407,-24 428,-15 448,-4 467,8 486,21 503,36 520,51 535,68 550,85 563,104 575,123 586,143 595,164 604,185 611,207 616,229 621,251 624,274" fill="#262626"/><polygon points="625,297 626,320 627,343 627,367 626,391 624,416 621,441 616,465 609,490 599,514 587,537 572,558 554,577 533,593 511,606 488,617 464,626 439,633 415,638 391,643 368,647 344,649 321,652 297,653 274,653 251,652 228,650 205,646 182,641 159,635 137,627 116,617 96,606 76,593 57,579 40,564 23,548 8,530 -6,512 -18,492 -30,472 -40,452 -49,431 -56,409 -62,387 -67,365 -70,342 -72,320 -73,297 -72,274 -69,252 -66,229 -60,207 -54,186 -46,165 -36,144 -26,124 -14,105 -0,86 14,69 29,52 46,37 63,23 82,9 101,-3 121,-13 142,-23 163,-31 184,-37 207,-42 229,-46 251,-48 274,-49 297,-48 319,-46 341,-42 364,-37 385,-31 406,-23 427,-13 447,-3 466,9 485,23 502,37 519,52 534,69 548,86 562,105 574,124 584,144 594,165 602,186 609,207 615,229 619,252 623,274" fill="#262626"/><polygon points="623,297 625,320 625,343 625,367 624,391 622,415 619,440 614,465 607,489 598,513 585,536 570,557 552,575 532,591 510,604 487,615 463,624 439,631 415,637 391,641 367,645 344,648 320,650 297,651 274,651 251,650 228,648 205,645 182,640 160,633 138,625 117,615 97,604 77,592 59,578 41,563 25,546 10,529 -4,511 -17,491 -28,472 -38,451 -47,430 -55,409 -61,387 -65,364 -69,342 -70,320 -71,297 -70,274 -68,252 -64,230 -59,208 -52,186 -44,165 -35,145 -24,125 -12,106 1,87 15,70 31,54 47,38 64,24 83,11 102,-1 122,-12 142,-21 163,-29 185,-35 207,-41 229,-44 251,-46 274,-47 297,-46 319,-44 341,-41 363,-35 385,-29 406,-21 426,-12 446,-1 465,11 484,24 501,38 517,54 533,70 547,87 560,106 572,125 583,145 592,165 600,186 607,208 613,230 617,252 621,274" fill="#313131"/><polygon points="622,297 623,320 624,343 624,367 623,390 620,415 617,439 612,464 605,488 596,512 584,535 569,556 551,574 531,590 509,603 486,614 462,622 438,629 414,635 390,639 367,643 343,646 320,648 297,649 274,649 251,649 228,646 205,643 183,638 160,631 139,623 118,614 97,603 78,590 60,576 42,561 26,545 11,528 -3,510 -16,490 -27,471 -37,450 -46,429 -53,408 -59,386 -64,364 -67,342 -69,319 -69,297 -68,275 -66,252 -62,230 -57,208 -50,187 -43,166 -33,145 -23,126 -11,107 2,88 16,71 32,55 48,39 65,25 84,12 103,0 123,-10 143,-19 164,-27 185,-34 207,-39 229,-43 252,-45 274,-46 296,-45 319,-43 341,-39 363,-34 384,-27 405,-19 425,-10 445,0 464,12 483,25 500,39 516,55 532,71 546,88 559,107 571,126 581,145 591,166 599,187 606,208 611,230 616,252 619,274" fill="#474747"/><polygon points="620,297 621,320 622,343 622,366 621,390 619,414 615,438 611,463 604,487 594,511 582,534 567,554 550,573 529,588 508,601 485,612 461,621 437,628 413,633 390,638 366,641 343,644 320,646 297,648 274,648 251,647 228,645 206,641 183,636 161,630 139,622 119,612 98,601 79,589 61,575 43,560 27,544 12,527 -2,508 -14,489 -25,470 -35,450 -44,429 -51,407 -57,386 -62,364 -65,342 -67,319 -68,297 -67,275 -64,252 -61,230 -55,209 -49,187 -41,167 -32,146 -21,127 -9,108 4,90 18,72 33,56 49,41 67,27 85,14 104,2 123,-9 144,-18 164,-26 186,-32 208,-37 230,-41 252,-43 274,-44 296,-43 318,-41 340,-37 362,-32 384,-26 404,-18 425,-9 444,2 463,14 481,27 499,41 515,56 530,72 544,90 557,108 569,127 580,146 589,166 597,187 604,209 610,230 614,252 617,274" fill="#646464"/><polygon points="618,297 620,320 620,343 620,366 619,389 617,413 614,438 609,462 602,486 593,510 581,532 566,553 548,571 528,587 506,600 484,611 460,619 436,626 413,632 389,636 366,640 343,643 320,645 297,646 274,646 251,645 228,643 206,639 184,635 162,628 140,620 119,611 99,600 80,587 62,574 45,559 28,543 14,525 -0,507 -13,489 -24,469 -34,449 -42,428 -50,407 -56,385 -60,363 -63,341 -65,319 -66,297 -65,275 -63,253 -59,231 -54,209 -47,188 -39,167 -30,147 -20,127 -8,109 5,91 19,73 34,57 50,42 68,28 86,15 104,3 124,-7 144,-16 165,-24 186,-31 208,-36 230,-39 252,-41 274,-42 296,-41 318,-39 340,-36 362,-31 383,-24 404,-16 424,-7 444,3 462,15 480,28 498,42 514,57 529,73 543,91 556,109 568,127 578,147 588,167 596,188 602,209 608,231 612,252 616,275" fill="#828282"/><polygon points="616,297 618,320 618,342 618,365 617,389 615,413 612,437 607,461 600,485 591,509 579,531 564,552 547,570 527,585 505,598 482,609 459,617 435,624 412,630 389,634 365,638 342,641 320,643 297,644 274,644 251,643 229,641 206,638 184,633 162,626 141,619 120,609 100,598 81,586 63,572 46,557 30,541 15,524 1,506 -11,488 -22,468 -32,448 -41,427 -48,406 -54,385 -59,363 -62,341 -64,319 -64,297 -63,275 -61,253 -57,231 -52,210 -46,189 -38,168 -29,148 -18,128 -7,110 6,92 20,75 35,58 52,43 69,29 87,16 105,5 125,-6 145,-15 166,-22 187,-29 208,-34 230,-37 252,-40 274,-40 296,-40 318,-37 340,-34 361,-29 382,-22 403,-15 423,-6 443,5 461,16 479,29 496,43 513,58 528,75 542,92 555,110 566,128 577,148 586,168 594,188 601,209 606,231 611,253 614,275" fill="#9f9f9f"/><polygon points="615,297 616,319 617,342 617,365 616,389 614,412 610,436 605,460 599,484 590,508 578,530 563,550 545,568 526,584 504,597 481,607 458,616 435,623 411,628 388,633 365,636 342,639 319,641 297,642 274,642 251,642 229,639 207,636 184,631 163,625 141,617 121,608 101,597 82,584 64,571 47,556 31,540 16,523 3,505 -10,487 -21,467 -31,447 -39,427 -46,406 -52,384 -57,363 -60,341 -62,319 -62,297 -61,275 -59,253 -55,231 -50,210 -44,189 -36,169 -27,149 -17,129 -5,111 8,93 22,76 37,60 53,45 70,31 88,18 106,6 126,-4 146,-13 166,-21 187,-27 209,-32 230,-36 252,-38 274,-39 296,-38 318,-36 339,-32 361,-27 382,-21 402,-13 422,-4 442,6 460,18 478,31 495,45 511,60 526,76 540,93 553,111 565,129 575,148 584,168 592,189 599,210 605,231 609,253 612,275" fill="#b5b5b5"/><polygon points="613,297 614,319 615,342 615,365 614,388 612,412 609,436 604,460 597,483 588,507 576,529 561,549 544,567 524,582 503,595 480,606 457,614 434,621 410,626 387,631 364,634 342,637 319,639 297,640 274,641 252,640 229,638 207,634 185,629 163,623 142,615 122,606 102,595 83,583 65,569 48,555 32,539 17,522 4,504 -8,486 -19,466 -29,446 -38,426 -45,405 -51,384 -55,362 -58,341 -60,319 -61,297 -60,275 -57,253 -54,232 -49,211 -42,190 -35,169 -26,149 -15,130 -4,111 9,94 23,77 38,61 54,46 71,32 88,19 107,8 126,-2 146,-11 167,-19 188,-26 209,-30 230,-34 252,-36 274,-37 296,-36 318,-34 339,-30 360,-26 381,-19 402,-11 422,-2 441,8 460,19 477,32 494,46 510,61 525,77 539,94 552,111 563,130 574,149 583,169 591,190 597,210 603,232 607,253 610,275" fill="#c0c0c0"/><polygon points="611,297 612,319 613,342 613,364 612,388 610,411 607,435 602,459 595,483 586,506 574,528 560,548 543,566 523,581 502,594 479,604 456,613 433,619 410,625 387,629 364,633 341,635 319,637 296,639 274,639 252,638 229,636 207,632 185,628 164,621 143,614 122,604 103,594 84,581 66,568 49,553 33,538 19,521 5,503 -7,485 -18,465 -27,446 -36,425 -43,405 -49,384 -53,362 -57,341 -58,319 -59,297 -58,275 -56,254 -52,232 -47,211 -41,190 -33,170 -24,150 -14,131 -2,112 10,95 24,78 39,62 55,47 72,33 89,21 108,9 127,-1 147,-10 167,-18 188,-24 209,-29 231,-32 252,-34 274,-35 296,-34 317,-32 339,-29 360,-24 381,-18 401,-10 421,-1 440,9 459,21 476,33 493,47 509,62 524,78 538,95 550,112 562,131 572,150 581,170 589,190 596,211 601,232 605,253 609,275" fill="#c0c0c0"/><polygon points="609,297 611,319 611,341 611,364 610,387 608,410 605,434 600,458 594,482 585,505 573,526 558,546 541,564 522,579 500,592 478,603 455,611 432,618 409,623 386,627 363,631 341,634 319,636 296,637 274,637 252,636 230,634 208,631 186,626 164,620 144,612 123,603 104,592 85,580 67,567 50,552 35,536 20,520 7,502 -5,484 -16,465 -26,445 -34,425 -41,404 -47,383 -52,362 -55,340 -57,319 -57,297 -56,275 -54,254 -50,232 -45,211 -39,191 -31,171 -22,151 -12,132 -1,113 12,96 26,79 40,63 56,49 73,35 90,22 109,11 128,1 148,-8 168,-16 188,-22 210,-27 231,-31 252,-33 274,-33 296,-33 317,-31 338,-27 360,-22 380,-16 400,-8 420,1 439,11 458,22 475,35 492,49 508,63 522,79 536,96 549,113 560,132 570,151 579,170 587,191 594,211 599,232 604,254 607,275" fill="#b5b5b5"/><polygon points="607,297 609,319 610,341 609,364 608,387 606,410 603,433 599,457 592,481 583,503 571,525 557,545 540,563 520,578 499,591 477,601 454,609 431,616 408,621 386,626 363,629 341,632 318,634 296,635 274,635 252,634 230,632 208,629 186,624 165,618 144,610 124,601 105,590 86,578 68,565 52,551 36,535 22,518 8,501 -4,483 -15,464 -24,444 -33,424 -40,403 -45,383 -50,361 -53,340 -55,319 -55,297 -54,275 -52,254 -49,233 -44,212 -37,191 -30,171 -21,152 -11,133 1,114 13,97 27,80 42,65 57,50 74,36 91,24 110,12 129,2 148,-7 168,-14 189,-20 210,-25 231,-29 253,-31 274,-32 295,-31 317,-29 338,-25 359,-20 380,-14 400,-7 419,2 438,12 457,24 474,36 491,50 506,65 521,80 535,97 547,114 559,133 569,152 578,171 586,191 592,212 598,233 602,254 605,275" fill="#9f9f9f"/><polygon points="606,297 607,319 608,341 608,363 607,386 605,409 601,433 597,456 590,480 581,502 570,524 555,544 538,561 519,576 498,589 476,599 453,607 430,614 408,619 385,624 363,627 340,630 318,632 296,633 274,633 252,632 230,630 208,627 187,622 166,616 145,609 125,599 106,589 87,577 69,564 53,549 37,534 23,517 10,500 -2,482 -13,463 -23,443 -31,423 -38,403 -44,382 -48,361 -51,340 -53,318 -54,297 -53,276 -50,254 -47,233 -42,212 -36,192 -28,172 -19,152 -9,134 2,115 15,98 28,81 43,66 58,51 75,38 92,25 111,14 129,4 149,-5 169,-12 189,-19 210,-24 231,-27 253,-29 274,-30 295,-29 317,-27 338,-24 359,-19 379,-12 399,-5 419,4 437,14 456,25 473,38 490,51 505,66 520,81 533,98 546,115 557,134 567,152 576,172 584,192 590,212 596,233 600,254 603,275" fill="#828282"/><polygon points="604,297 605,319 606,341 606,363 605,386 603,409 600,432 595,455 588,479 580,501 568,523 554,542 537,560 518,575 497,587 475,598 452,606 430,612 407,618 384,622 362,626 340,628 318,630 296,631 274,632 252,631 230,629 209,625 187,621 166,614 146,607 126,598 106,587 88,575 70,562 54,548 39,532 24,516 11,499 -1,481 -12,462 -21,442 -29,423 -36,402 -42,382 -46,361 -50,340 -51,318 -52,297 -51,276 -49,255 -45,234 -40,213 -34,192 -26,173 -18,153 -8,134 4,116 16,99 30,83 44,67 60,53 76,39 93,27 111,15 130,5 150,-3 170,-11 190,-17 211,-22 232,-25 253,-27 274,-28 295,-27 316,-25 337,-22 358,-17 378,-11 398,-3 418,5 437,15 455,27 472,39 488,53 504,67 518,83 532,99 544,116 556,134 566,153 575,173 582,192 589,213 594,233 598,254 602,276" fill="#646464"/><polygon points="602,297 603,319 604,340 604,363 603,385 601,408 598,431 593,454 587,478 578,500 566,521 552,541 535,558 516,573 496,586 474,596 451,604 429,611 406,616 384,620 362,624 340,626 318,628 296,629 274,630 252,629 231,627 209,623 188,619 167,613 146,605 127,596 107,586 89,574 72,561 55,546 40,531 26,515 13,498 1,480 -10,461 -19,442 -28,422 -35,402 -40,381 -45,360 -48,339 -50,318 -50,297 -49,276 -47,255 -43,234 -38,213 -32,193 -25,173 -16,154 -6,135 5,117 18,100 31,84 45,68 61,54 77,41 94,28 112,17 131,7 150,-2 170,-9 190,-15 211,-20 232,-23 253,-26 274,-26 295,-26 316,-23 337,-20 358,-15 378,-9 398,-2 417,7 436,17 454,28 471,41 487,54 503,68 517,84 530,100 543,117 554,135 564,154 573,173 581,193 587,213 592,234 597,255 600,276" fill="#474747"/><polygon points="600,297 602,318 602,340 602,362 601,385 599,407 596,430 591,454 585,477 576,499 565,520 551,540 534,557 515,572 494,584 473,594 450,602 428,609 405,614 383,618 361,622 339,625 317,626 296,628 274,628 252,627 231,625 209,622 188,617 167,611 147,603 127,594 108,584 90,572 73,559 56,545 41,530 27,514 14,496 2,479 -8,460 -18,441 -26,421 -33,401 -38,381 -43,360 -46,339 -48,318 -48,297 -47,276 -45,255 -42,234 -37,214 -31,194 -23,174 -14,155 -4,136 7,118 19,101 32,85 47,70 62,55 78,42 95,30 113,19 132,9 151,0 171,-7 191,-14 211,-18 232,-22 253,-24 274,-24 295,-24 316,-22 337,-18 357,-14 377,-7 397,0 416,9 435,19 453,30 470,42 486,55 501,70 516,85 529,101 541,118 552,136 562,155 571,174 579,194 585,214 591,234 595,255 598,276" fill="#313131"/><polygon points="598,297 600,318 600,340 600,362 599,384 597,407 594,430 590,453 583,476 574,498 563,519 549,538 532,555 514,570 493,583 472,593 449,601 427,607 405,612 382,617 361,620 339,623 317,625 296,626 274,626 252,625 231,623 210,620 189,615 168,609 148,602 128,593 109,582 91,571 74,558 58,544 43,528 28,512 16,495 4,478 -7,459 -16,440 -24,421 -31,401 -37,380 -41,360 -44,339 -46,318 -46,297 -45,276 -43,255 -40,235 -35,214 -29,194 -21,175 -13,156 -3,137 8,119 20,102 34,86 48,71 63,57 79,43 96,31 114,20 133,10 152,2 171,-6 191,-12 212,-16 232,-20 253,-22 274,-23 295,-22 316,-20 336,-16 357,-12 377,-6 396,2 415,10 434,20 452,31 469,43 485,57 500,71 514,86 528,102 540,119 551,137 561,156 570,175 577,194 584,214 589,234 593,255 596,276" fill="#262626"/><polygon points="597,297 598,318 598,340 598,362 597,384 595,406 592,429 588,452 581,475 573,497 561,518 548,537 531,554 512,569 492,581 470,591 448,599 426,605 404,611 382,615 360,618 338,621 317,623 295,624 274,624 253,623 231,621 210,618 189,613 169,607 149,600 129,591 110,581 92,569 75,556 59,542 44,527 30,511 17,494 5,477 -5,458 -14,439 -23,420 -29,400 -35,380 -39,359 -42,339 -44,318 -44,297 -44,276 -41,255 -38,235 -33,215 -27,195 -20,175 -11,156 -1,138 10,120 22,104 35,87 49,72 64,58 81,45 97,33 115,22 133,12 152,3 172,-4 192,-10 212,-15 233,-18 253,-20 274,-21 295,-20 315,-18 336,-15 356,-10 376,-4 396,3 415,12 433,22 451,33 467,45 484,58 499,72 513,87 526,104 538,120 549,138 559,156 568,175 575,195 582,215 587,235 591,255 594,276" fill="#262626"/><polygon points="595,297 596,318 597,339 596,361 596,383 594,406 591,428 586,451 580,473 571,495 560,516 546,535 530,553 511,567 491,579 469,589 447,597 425,604 403,609 381,613 360,616 338,619 317,621 295,622 274,622 253,621 232,619 211,616 190,612 169,606 149,598 130,589 111,579 93,568 76,555 60,541 45,526 31,510 18,493 7,475 -4,457 -13,438 -21,419 -28,399 -33,379 -37,359 -40,338 -42,318 -43,297 -42,276 -40,256 -36,235 -31,215 -25,195 -18,176 -9,157 0,139 11,121 23,105 36,89 51,74 66,59 82,46 98,34 116,23 134,14 153,5 172,-2 192,-8 212,-13 233,-16 253,-18 274,-19 295,-18 315,-16 336,-13 356,-8 376,-2 395,5 414,14 432,23 450,34 466,46 482,59 497,74 512,89 525,105 537,121 548,139 558,157 566,176 574,195 580,215 585,235 589,255 592,276" fill="#313131"/><polygon points="593,297 594,318 595,339 595,361 594,383 592,405 589,427 584,450 578,472 569,494 558,515 544,534 528,551 509,566 489,578 468,587 446,595 424,602 402,607 381,611 359,614 338,617 316,619 295,620 274,620 253,619 232,617 211,614 190,610 170,604 150,596 131,588 112,577 94,566 77,553 61,539 46,525 33,509 20,492 8,474 -2,456 -11,438 -19,418 -26,399 -31,379 -36,359 -39,338 -40,318 -41,297 -40,276 -38,256 -34,236 -30,216 -24,196 -16,177 -8,158 2,140 13,122 25,106 38,90 52,75 67,61 83,48 99,36 117,25 135,15 154,7 173,-0 193,-6 213,-11 233,-14 253,-16 274,-17 295,-16 315,-14 335,-11 355,-6 375,-0 394,7 413,15 431,25 449,36 465,48 481,61 496,75 510,90 523,106 535,122 546,140 556,158 564,177 572,196 578,215 583,235 587,256 591,276" fill="#474747"/><polygon points="591,297 592,318 593,339 593,360 592,382 590,404 587,427 582,449 576,471 568,493 556,514 543,533 527,550 508,564 488,576 467,586 445,594 423,600 402,605 380,609 359,613 337,615 316,617 295,618 274,618 253,618 232,616 211,612 191,608 170,602 151,595 132,586 113,576 95,564 79,552 63,538 48,523 34,507 21,491 10,473 -0,455 -9,437 -17,418 -24,398 -30,378 -34,358 -37,338 -39,317 -39,297 -38,277 -36,256 -33,236 -28,216 -22,197 -15,177 -6,159 4,141 14,124 26,107 39,91 53,76 68,62 84,49 101,37 118,27 136,17 154,8 174,1 193,-5 213,-9 233,-13 254,-15 274,-15 294,-15 315,-13 335,-9 355,-5 374,1 394,8 412,17 430,27 447,37 464,49 480,62 495,76 509,91 522,107 534,123 545,141 554,159 563,177 570,196 576,216 582,236 586,256 589,276" fill="#646464"/><polygon points="589,297 590,318 591,339 591,360 590,382 588,404 585,426 581,448 574,470 566,492 555,512 541,531 525,548 507,562 487,574 466,584 444,592 423,598 401,603 379,607 358,611 337,613 316,615 295,616 274,616 253,616 232,614 212,610 191,606 171,600 151,593 132,584 114,574 96,563 80,550 64,537 49,522 36,506 23,490 12,472 1,454 -8,436 -16,417 -22,398 -28,378 -32,358 -35,338 -37,317 -37,297 -36,277 -34,256 -31,236 -26,217 -20,197 -13,178 -4,160 5,142 16,125 28,108 41,92 55,78 69,64 85,51 102,39 119,28 137,19 155,10 174,3 194,-3 213,-7 233,-11 254,-13 274,-13 294,-13 315,-11 335,-7 354,-3 374,3 393,10 411,19 429,28 446,39 463,51 479,64 493,78 507,92 520,108 532,125 543,142 553,160 561,178 568,197 575,216 580,236 584,256 587,276" fill="#828282"/><polygon points="587,297 588,318 589,338 589,360 588,381 586,403 583,425 579,447 572,469 564,491 553,511 540,530 523,546 505,561 485,573 465,582 443,590 422,596 400,601 379,605 358,609 337,611 316,613 295,614 274,615 253,614 233,612 212,609 192,604 172,598 152,591 133,582 115,572 97,561 81,549 65,535 51,520 37,505 25,488 13,471 3,453 -6,435 -14,416 -20,397 -26,377 -30,357 -33,337 -35,317 -35,297 -34,277 -32,257 -29,237 -24,217 -18,198 -11,179 -3,161 7,143 17,126 29,109 42,94 56,79 71,65 86,52 103,40 120,30 138,20 156,12 175,5 194,-1 214,-6 234,-9 254,-11 274,-12 294,-11 314,-9 334,-6 354,-1 373,5 392,12 410,20 428,30 445,40 462,52 477,65 492,79 506,94 519,109 531,126 541,143 551,160 559,179 567,198 573,217 578,237 582,256 585,277" fill="#9f9f9f"/><polygon points="585,297 586,317 587,338 587,359 586,381 584,402 581,424 577,446 571,468 562,490 551,510 538,528 522,545 504,559 484,571 463,581 442,588 421,595 399,600 378,604 357,607 336,609 315,611 295,612 274,613 253,612 233,610 212,607 192,602 172,596 153,589 134,581 116,571 99,560 82,547 66,534 52,519 38,504 26,487 15,470 5,452 -4,434 -12,415 -19,396 -24,377 -28,357 -31,337 -33,317 -33,297 -32,277 -30,257 -27,237 -22,218 -16,198 -9,180 -1,161 8,144 19,127 31,110 43,95 57,80 72,66 87,54 104,42 121,31 138,22 157,14 175,7 195,1 214,-4 234,-7 254,-9 274,-10 294,-9 314,-7 334,-4 353,1 373,7 391,14 410,22 427,31 444,42 461,54 476,66 491,80 505,95 517,110 529,127 540,144 549,161 558,180 565,198 571,217 576,237 580,257 583,277" fill="#b5b5b5"/><polygon points="583,297 585,317 585,338 585,359 584,380 582,402 579,423 575,445 569,467 560,488 550,509 536,527 520,543 502,557 483,569 462,579 441,586 420,593 399,598 377,602 357,605 336,608 315,609 295,610 274,611 253,610 233,608 213,605 193,600 173,595 154,587 135,579 117,569 100,558 83,546 68,532 53,518 40,502 28,486 16,469 6,452 -3,433 -10,415 -17,396 -22,376 -26,357 -29,337 -31,317 -31,297 -31,277 -28,257 -25,238 -21,218 -15,199 -8,180 1,162 10,145 21,128 32,111 45,96 59,82 73,68 88,55 105,44 122,33 139,24 157,15 176,8 195,3 215,-2 234,-5 254,-7 274,-8 294,-7 314,-5 333,-2 353,3 372,8 391,15 409,24 426,33 443,44 460,55 475,68 489,82 503,96 516,111 527,128 538,145 547,162 556,180 563,199 569,218 574,237 578,257 581,277" fill="#c0c0c0"/><polygon points="581,297 583,317 583,338 583,358 582,380 580,401 577,423 573,444 567,466 559,487 548,507 535,526 519,542 501,556 482,568 461,577 440,585 419,591 398,596 377,600 356,603 335,606 315,607 294,608 274,609 254,608 233,606 213,603 193,598 174,593 154,586 136,577 118,567 101,556 84,544 69,531 55,516 41,501 29,485 18,468 8,451 -1,433 -9,414 -15,395 -20,376 -24,356 -27,337 -29,317 -29,297 -29,277 -27,257 -23,238 -19,219 -13,200 -6,181 2,163 12,146 22,129 34,113 46,97 60,83 74,69 90,57 106,45 123,35 140,25 158,17 177,10 196,5 215,0 234,-3 254,-5 274,-6 294,-5 314,-3 333,0 352,5 371,10 390,17 408,25 425,35 442,45 458,57 474,69 488,83 502,97 514,113 526,129 536,146 546,163 554,181 561,200 567,218 572,238 576,257 579,277" fill="#c0c0c0"/><polygon points="579,297 581,317 581,337 581,358 580,379 578,400 575,422 571,444 565,465 557,486 546,506 533,524 517,540 500,554 480,566 460,575 439,583 418,589 397,594 376,598 355,601 335,604 315,605 294,606 274,607 254,606 234,604 214,601 194,597 174,591 155,584 137,575 119,566 102,555 86,542 70,529 56,515 43,500 31,484 20,467 10,450 1,432 -7,413 -13,394 -18,375 -23,356 -25,336 -27,317 -28,297 -27,277 -25,258 -21,238 -17,219 -11,200 -4,182 4,164 13,147 24,130 35,114 48,99 61,84 76,71 91,58 107,47 124,36 141,27 159,19 177,12 196,6 215,2 235,-1 254,-3 274,-4 294,-3 313,-1 333,2 352,6 371,12 389,19 407,27 424,36 441,47 457,58 472,71 487,84 500,99 513,114 524,130 535,147 544,164 552,182 559,200 565,219 570,238 574,257 577,277" fill="#b5b5b5"/><polygon points="577,297 579,317 579,337 579,358 578,379 576,400 574,421 569,443 563,464 555,485 544,504 531,523 516,539 498,553 479,564 459,573 438,581 417,587 396,592 375,596 355,599 335,602 314,603 294,604 274,605 254,604 234,602 214,599 194,595 175,589 156,582 138,574 120,564 103,553 87,541 72,528 58,513 44,498 32,482 21,466 11,449 3,431 -5,413 -11,394 -17,375 -21,356 -24,336 -25,317 -26,297 -25,277 -23,258 -19,239 -15,220 -9,201 -2,183 6,165 15,148 25,131 37,115 49,100 63,86 77,72 92,60 108,48 125,38 142,29 160,21 178,14 197,8 216,4 235,1 254,-1 274,-2 294,-1 313,1 332,4 351,8 370,14 388,21 406,29 423,38 440,48 456,60 471,72 485,86 499,100 511,115 523,131 533,147 542,165 550,183 557,201 563,219 568,238 572,258 575,277" fill="#9f9f9f"/><polygon points="575,297 577,317 577,337 577,357 576,378 574,399 572,420 567,442 561,463 553,484 543,503 530,521 514,537 497,551 478,562 457,572 437,579 416,585 395,590 375,594 354,597 334,600 314,601 294,602 274,603 254,602 234,600 214,597 195,593 176,587 157,580 139,572 121,562 104,551 88,539 73,526 59,512 46,497 34,481 23,465 13,448 4,430 -3,412 -9,393 -15,374 -19,355 -22,336 -23,316 -24,297 -23,278 -21,258 -18,239 -13,220 -7,202 -0,183 8,166 17,148 27,132 38,116 51,101 64,87 78,74 93,61 109,50 126,40 143,31 160,23 179,16 197,10 216,6 235,3 255,1 274,0 293,1 313,3 332,6 351,10 369,16 388,23 405,31 422,40 439,50 455,61 470,74 484,87 497,101 510,116 521,132 531,148 540,166 549,183 556,201 562,220 566,239 570,258 573,277" fill="#828282"/><polygon points="573,297 575,317 575,337 575,357 574,377 572,398 570,419 565,441 559,462 551,482 541,502 528,520 513,536 495,549 476,561 456,570 436,577 415,583 395,588 374,592 354,595 334,598 314,599 294,600 274,601 254,600 234,598 215,595 195,591 176,585 158,578 139,570 122,560 105,550 89,538 74,525 60,511 47,496 35,480 25,464 15,447 6,429 -1,411 -8,393 -13,374 -17,355 -20,336 -21,316 -22,297 -21,278 -19,258 -16,239 -11,221 -5,202 1,184 9,166 18,149 29,133 40,117 52,102 65,88 79,75 94,63 110,52 126,42 144,32 161,24 179,18 198,12 216,8 235,5 255,3 274,2 293,3 313,5 332,8 350,12 369,18 387,24 404,32 422,42 438,52 454,63 469,75 483,88 496,102 508,117 519,133 530,149 539,166 547,184 554,202 560,220 565,239 568,258 571,278" fill="#646464"/><polygon points="571,297 573,317 573,336 573,356 572,377 570,398 568,419 563,440 557,461 549,481 539,500 526,518 511,534 494,547 475,559 455,568 435,575 414,581 394,586 373,590 353,593 333,596 314,597 294,598 274,599 254,598 235,596 215,593 196,589 177,583 158,576 140,568 123,559 106,548 91,536 76,523 62,509 49,494 37,479 26,463 17,446 8,428 1,410 -6,392 -11,373 -15,354 -18,335 -19,316 -20,297 -19,278 -17,259 -14,240 -9,221 -4,203 3,185 11,167 20,150 30,134 42,119 54,104 67,90 81,77 96,65 111,53 127,43 144,34 162,26 180,20 198,14 217,10 236,6 255,5 274,4 293,5 312,6 331,10 350,14 368,20 386,26 404,34 421,43 437,53 452,65 467,77 481,90 494,104 506,119 518,134 528,150 537,167 545,185 552,203 558,221 563,240 566,259 569,278" fill="#474747"/><polygon points="569,297 571,316 571,336 571,356 570,376 568,397 566,418 561,439 556,460 548,480 537,499 524,517 509,532 492,546 474,557 454,566 434,573 413,579 393,584 373,588 353,591 333,594 313,595 294,596 274,597 254,596 235,594 216,591 196,587 178,581 159,574 141,566 124,557 107,546 92,534 77,522 63,508 50,493 39,478 28,461 18,445 10,427 2,409 -4,391 -9,373 -13,354 -16,335 -17,316 -18,297 -17,278 -15,259 -12,240 -7,222 -2,203 5,186 13,168 22,151 32,135 43,120 55,105 68,91 82,78 97,66 112,55 128,45 145,36 163,28 180,21 199,16 217,12 236,8 255,7 274,6 293,7 312,8 331,12 349,16 368,21 385,28 403,36 420,45 436,55 451,66 466,78 480,91 493,105 505,120 516,135 526,151 535,168 543,186 550,203 556,221 561,240 564,259 567,278" fill="#313131"/><polygon points="567,297 569,316 569,336 569,356 568,376 566,396 564,417 559,438 554,458 546,479 535,498 523,515 508,531 491,544 472,555 453,564 433,572 412,577 392,582 372,586 352,589 333,592 313,593 293,594 274,594 255,594 235,592 216,589 197,585 178,579 160,572 142,564 125,555 109,545 93,533 78,520 65,506 52,492 40,476 30,460 20,444 12,426 4,409 -2,391 -7,372 -11,354 -14,335 -15,316 -16,297 -15,278 -13,259 -10,241 -5,222 0,204 7,186 15,169 24,152 34,136 45,121 57,106 70,93 83,80 98,68 113,57 129,47 146,38 163,30 181,23 199,18 218,14 236,10 255,9 274,8 293,9 312,10 330,14 349,18 367,23 385,30 402,38 419,47 435,57 450,68 465,80 478,93 491,106 503,121 514,136 524,152 533,169 541,186 548,204 554,222 559,240 562,259 565,278" fill="#262626"/><polygon points="565,297 566,316 567,336 567,355 566,375 564,396 562,416 557,437 552,457 544,477 534,496 521,514 506,529 489,542 471,553 451,562 431,570 411,575 391,580 371,584 352,587 332,589 313,591 293,592 274,592 255,592 235,590 216,587 197,583 179,577 161,571 143,563 126,553 110,543 94,531 80,518 66,505 54,490 42,475 31,459 22,443 14,425 6,408 0,390 -5,372 -9,353 -12,335 -13,316 -14,297 -13,278 -11,259 -8,241 -3,223 2,205 9,187 17,170 25,153 35,138 46,122 58,108 71,94 85,81 99,69 115,58 130,48 147,40 164,32 182,25 200,20 218,16 237,12 255,11 274,10 293,11 311,12 330,16 348,20 366,25 384,32 401,40 418,48 433,58 449,69 463,81 477,94 490,108 502,122 513,138 523,153 532,170 539,187 546,205 552,223 557,241 560,259 563,278" fill="#262626"/><polygon points="563,297 564,316 565,335 565,355 564,375 562,395 560,415 555,436 550,456 542,476 532,495 519,512 504,527 488,541 469,552 450,561 430,568 410,573 390,578 371,582 351,585 332,587 312,589 293,590 274,590 255,590 236,588 217,585 198,581 180,575 161,569 144,561 127,551 111,541 96,530 81,517 68,503 55,489 44,474 33,458 24,442 15,425 8,407 2,389 -3,371 -7,353 -10,334 -11,316 -12,297 -11,278 -9,260 -6,241 -1,223 4,205 11,188 18,171 27,154 37,139 48,124 60,109 72,95 86,83 101,71 116,60 132,50 148,41 165,34 182,27 200,22 218,17 237,14 255,13 274,12 293,13 311,14 330,17 348,22 366,27 383,34 400,41 416,50 432,60 447,71 462,83 476,95 488,109 500,124 511,139 521,154 530,171 538,188 544,205 550,223 555,241 558,260 561,278" fill="#313131"/><polygon points="561,297 562,316 563,335 563,354 562,374 560,394 557,414 553,435 548,455 540,475 530,493 517,511 503,526 486,539 468,550 449,559 429,566 409,572 390,576 370,580 351,583 331,585 312,587 293,588 274,588 255,587 236,586 217,583 199,579 180,573 162,567 145,559 128,550 112,539 97,528 83,515 69,502 57,488 45,473 35,457 25,440 17,424 10,406 4,389 -1,371 -5,352 -8,334 -9,316 -10,297 -9,278 -7,260 -4,242 1,224 6,206 13,189 20,172 29,156 39,140 50,125 61,110 74,97 87,84 102,73 117,62 133,52 149,43 166,36 183,29 201,24 219,20 237,16 255,15 274,14 293,15 311,16 329,20 347,24 365,29 382,36 399,43 415,52 431,62 446,73 461,84 474,97 487,110 498,125 509,140 519,156 528,172 536,189 542,206 548,224 553,242 556,260 559,278" fill="#474747"/><polygon points="559,297 560,316 561,335 561,354 560,374 558,393 555,414 551,434 546,454 538,473 528,492 516,509 501,524 485,537 467,548 448,557 428,564 408,570 389,574 369,578 350,581 331,583 312,585 293,586 274,586 255,585 236,584 218,581 199,577 181,571 163,565 146,557 129,548 113,538 98,526 84,514 71,500 58,486 47,471 37,456 27,439 19,423 12,406 6,388 1,370 -3,352 -6,334 -7,315 -7,297 -7,279 -5,260 -2,242 3,224 8,207 14,189 22,173 31,157 40,141 51,126 63,112 75,98 89,86 103,74 118,63 134,54 150,45 167,38 184,31 201,26 219,22 237,19 256,17 274,16 292,17 311,19 329,22 347,26 364,31 381,38 398,45 414,54 430,63 445,74 459,86 473,98 485,112 497,126 508,141 517,157 526,173 534,189 540,207 546,224 551,242 554,260 557,278" fill="#646464"/><polygon points="557,297 558,316 559,334 559,354 558,373 556,393 553,413 549,433 544,453 536,472 526,491 514,507 499,522 483,535 465,546 446,555 427,562 407,567 388,572 369,576 349,579 331,581 312,583 293,584 274,584 255,583 237,581 218,579 200,575 182,569 164,563 147,555 130,546 114,536 99,524 85,512 72,499 60,485 49,470 38,454 29,438 21,422 14,405 8,387 3,370 -1,352 -3,334 -5,315 -5,297 -5,279 -3,261 0,243 5,225 10,207 16,190 24,174 33,158 42,142 53,127 64,113 77,100 90,87 104,76 119,65 135,56 151,47 167,39 184,33 202,28 220,24 238,21 256,19 274,18 292,19 310,21 328,24 346,28 364,33 381,39 397,47 413,56 429,65 444,76 458,87 471,100 484,113 495,127 506,142 515,158 524,174 532,190 538,207 544,225 549,242 552,260 555,279" fill="#828282"/><polygon points="555,297 556,315 557,334 556,353 556,372 554,392 551,412 547,432 542,452 534,471 524,489 512,506 498,521 481,534 464,544 445,553 426,560 406,565 387,570 368,574 349,577 330,579 311,581 293,582 274,582 255,581 237,579 218,576 200,572 182,567 165,561 148,553 131,544 116,534 101,523 87,511 74,497 61,483 50,469 40,453 31,437 23,421 16,404 10,387 5,369 1,351 -1,333 -3,315 -3,297 -3,279 -1,261 2,243 7,225 12,208 18,191 26,175 34,159 44,143 54,129 66,115 78,101 92,89 106,77 120,67 136,57 152,49 168,41 185,35 202,30 220,26 238,23 256,21 274,20 292,21 310,23 328,26 346,30 363,35 380,41 396,49 412,57 428,67 442,77 456,89 470,101 482,115 494,129 504,143 514,159 522,175 530,191 536,208 542,225 546,243 550,261 553,279" fill="#9f9f9f"/><polygon points="553,297 554,315 554,334 554,353 553,372 552,391 549,411 545,431 540,450 532,469 522,488 510,504 496,519 480,532 462,542 444,551 425,558 405,563 386,568 367,572 348,574 330,577 311,578 293,579 274,580 256,579 237,577 219,574 201,570 183,565 166,559 149,551 132,542 117,532 102,521 88,509 75,496 63,482 52,467 42,452 33,436 25,420 18,403 12,386 7,369 3,351 1,333 -1,315 -1,297 -0,279 1,261 4,243 9,226 14,209 20,192 28,176 36,160 46,144 56,130 68,116 80,103 93,91 107,79 121,69 137,59 153,51 169,43 186,37 203,32 220,28 238,25 256,23 274,22 292,23 310,25 328,28 345,32 362,37 379,43 395,51 411,59 427,69 441,79 455,91 468,103 480,116 492,130 502,144 512,160 520,176 528,192 534,209 540,226 544,243 548,261 551,279" fill="#b5b5b5"/><polygon points="550,297 552,315 552,334 552,352 551,371 550,391 547,410 543,430 538,449 530,468 520,486 508,503 494,517 478,530 461,540 442,549 423,556 404,561 385,566 366,569 348,572 329,575 311,576 292,577 274,577 256,577 237,575 219,572 201,568 184,563 166,557 150,549 134,540 118,530 103,519 90,507 77,494 65,481 54,466 44,451 35,435 27,419 20,402 14,385 9,368 5,350 3,333 1,315 1,297 2,279 4,261 7,244 11,226 16,209 22,193 30,176 38,161 47,146 58,131 69,117 81,104 94,92 108,81 123,70 138,61 154,53 170,45 186,39 203,34 221,30 238,27 256,25 274,25 292,25 310,27 327,30 345,34 362,39 378,45 394,53 410,61 425,70 440,81 454,92 467,104 479,117 490,131 501,146 510,161 518,176 526,193 532,209 538,226 542,244 546,261 549,279" fill="#c0c0c0"/><polygon points="548,297 549,315 550,333 550,352 549,371 547,390 545,409 541,429 535,448 528,467 519,485 507,501 493,516 477,528 459,538 441,547 422,554 403,559 384,564 366,567 347,570 329,572 310,574 292,575 274,575 256,574 238,573 220,570 202,566 184,561 167,555 151,547 135,538 119,528 105,517 91,506 78,493 66,479 55,465 46,450 37,434 29,418 22,401 16,385 11,367 8,350 5,332 4,315 3,297 4,279 6,262 9,244 13,227 18,210 24,194 32,177 40,162 49,147 60,132 71,119 83,106 96,94 109,83 124,72 139,63 154,55 171,47 187,41 204,36 221,32 239,29 256,27 274,27 292,27 309,29 327,32 344,36 361,41 377,47 394,55 409,63 424,72 439,83 452,94 465,106 477,119 488,132 499,147 508,162 517,177 524,193 530,210 536,227 540,244 544,261 546,279" fill="#c0c0c0"/><polygon points="546,297 547,315 548,333 548,351 547,370 545,389 543,408 539,428 533,447 526,465 517,483 505,499 491,514 475,526 458,537 440,545 421,552 402,557 384,562 365,565 347,568 328,570 310,572 292,573 274,573 256,572 238,570 220,568 203,564 185,559 168,552 152,545 136,536 121,527 106,516 93,504 80,491 68,478 57,463 47,448 39,433 31,417 24,401 18,384 13,367 10,350 7,332 6,315 5,297 6,279 8,262 11,245 15,228 20,211 26,194 33,178 42,163 51,148 61,134 72,120 84,107 97,95 111,84 125,74 140,65 155,57 171,49 188,43 205,38 222,34 239,31 256,29 274,29 292,29 309,31 326,34 343,38 360,43 377,49 393,57 408,65 423,74 437,84 451,95 464,107 476,120 487,134 497,148 506,163 515,178 522,194 528,211 534,227 538,244 541,262 544,279" fill="#b5b5b5"/><polygon points="544,297 545,315 545,333 545,351 545,369 543,388 540,407 537,427 531,446 524,464 515,482 503,498 489,512 473,524 456,535 438,543 420,550 401,555 383,559 364,563 346,566 328,568 310,569 292,570 274,571 256,570 238,568 221,565 203,562 186,557 169,550 153,543 137,534 122,525 108,514 94,502 81,490 70,476 59,462 49,447 41,432 33,416 26,400 20,383 16,366 12,349 9,332 8,314 7,297 8,280 10,262 13,245 17,228 22,211 28,195 35,179 44,164 53,149 63,135 74,122 86,109 99,97 112,86 126,76 141,67 156,58 172,51 189,45 205,40 222,36 239,33 257,32 274,31 291,32 309,33 326,36 343,40 359,45 376,51 392,58 407,67 422,76 436,86 449,97 462,109 474,122 485,135 495,149 504,164 513,179 520,195 526,211 532,228 536,245 539,262 542,279" fill="#9f9f9f"/><polygon points="541,297 543,315 543,332 543,351 542,369 541,388 538,406 535,425 529,444 522,463 513,480 501,496 487,510 472,522 455,533 437,541 419,548 400,553 382,557 363,561 345,563 327,566 310,567 292,568 274,568 256,568 239,566 221,563 204,559 187,554 170,548 154,541 138,532 123,523 109,512 96,500 83,488 72,475 61,461 51,446 42,431 35,415 28,399 22,382 18,366 14,349 12,332 10,314 10,297 10,280 12,263 15,246 19,229 24,212 30,196 37,180 46,165 55,150 65,136 76,123 87,110 100,99 113,88 127,78 142,69 157,60 173,53 189,47 206,42 223,38 240,35 257,34 274,33 291,34 308,35 325,38 342,42 359,47 375,53 391,60 406,69 421,78 435,88 448,99 461,110 472,123 483,136 493,150 502,165 511,180 518,196 524,212 529,229 534,245 537,262 540,280" fill="#828282"/><polygon points="539,297 540,314 541,332 541,350 540,368 538,387 536,406 532,424 527,443 520,461 511,479 499,494 485,508 470,521 453,531 436,539 417,545 399,551 381,555 363,558 345,561 327,563 309,565 292,566 274,566 256,565 239,564 222,561 204,557 187,552 171,546 155,539 139,530 125,521 110,510 97,499 85,486 73,473 63,459 53,445 44,430 37,414 30,398 24,382 20,365 16,348 14,331 12,314 12,297 13,280 14,263 17,246 21,229 26,213 32,197 39,181 47,166 57,152 66,138 77,125 89,112 102,100 115,89 129,80 143,70 158,62 174,55 190,49 206,44 223,40 240,38 257,36 274,35 291,36 308,38 325,40 342,44 358,49 374,55 390,62 405,70 419,80 433,89 446,100 459,112 471,125 482,138 492,152 501,166 509,181 516,197 522,213 527,229 531,246 535,263 537,280" fill="#646464"/><polygon points="537,297 538,314 538,332 538,350 538,368 536,386 534,405 530,423 525,442 518,460 509,477 497,493 484,507 468,519 452,529 434,537 416,543 398,549 380,553 362,556 344,559 326,561 309,562 291,563 274,563 257,563 239,561 222,559 205,555 188,550 172,544 156,537 141,528 126,519 112,508 99,497 86,485 75,471 65,458 55,443 46,428 39,413 32,397 27,381 22,365 19,348 16,331 15,314 14,297 15,280 17,263 19,246 23,230 28,214 34,198 41,182 49,167 58,153 68,139 79,126 91,114 103,102 116,91 130,81 144,72 159,64 175,57 191,51 207,47 223,43 240,40 257,38 274,38 291,38 308,40 325,43 341,47 357,51 373,57 389,64 404,72 418,81 432,91 445,102 457,114 469,126 480,139 490,153 499,167 507,182 514,198 520,214 525,230 529,246 533,263 535,280" fill="#474747"/><polygon points="535,297 536,314 536,331 536,349 535,367 534,385 531,404 528,422 523,441 516,458 507,475 495,491 482,505 467,517 450,527 433,535 415,541 397,546 379,550 361,554 343,556 326,558 309,560 291,561 274,561 257,560 240,559 222,556 206,552 189,548 173,542 157,534 142,526 127,517 113,506 100,495 88,483 77,470 66,456 57,442 48,427 41,412 34,396 29,380 24,364 21,347 18,331 17,314 16,297 17,280 19,263 22,247 26,230 30,214 36,199 43,183 51,168 60,154 70,140 81,127 92,115 104,104 118,93 131,83 145,74 160,66 176,59 191,54 207,49 224,45 240,42 257,40 274,40 291,40 308,42 324,45 341,49 357,54 372,59 388,66 403,74 417,83 430,93 444,104 456,115 467,127 478,140 488,154 497,168 505,183 512,199 518,214 523,230 527,247 530,263 533,280" fill="#313131"/><polygon points="532,297 533,314 534,331 533,349 533,366 531,384 529,403 526,421 521,439 514,457 504,474 493,489 480,503 465,515 449,525 431,533 414,539 396,544 378,548 360,551 343,554 326,556 308,558 291,558 274,559 257,558 240,556 223,554 206,550 190,545 174,539 158,532 143,524 129,515 115,504 102,493 90,481 79,468 68,455 59,441 51,426 43,411 37,395 31,379 27,363 23,347 21,330 19,314 19,297 19,280 21,264 24,247 28,231 33,215 39,199 45,184 53,170 62,155 72,142 82,129 94,117 106,105 119,95 132,85 147,76 161,68 176,62 192,56 208,51 224,47 241,44 257,43 274,42 291,43 307,44 324,47 340,51 356,56 372,62 387,68 401,76 416,85 429,95 442,105 454,117 466,129 476,142 486,155 495,170 503,184 510,199 516,215 521,231 525,247 528,264 530,280" fill="#262626"/><polygon points="530,297 531,314 531,331 531,348 530,366 529,383 527,402 523,420 518,438 511,456 502,472 491,488 478,501 463,513 447,523 430,530 412,537 395,542 377,545 359,549 342,551 325,553 308,555 291,556 274,556 257,555 240,554 223,551 207,548 191,543 175,537 159,530 144,522 130,513 116,502 104,491 92,479 80,467 70,453 61,439 53,425 45,410 39,394 33,379 29,363 25,346 23,330 21,314 21,297 22,280 23,264 26,248 30,232 35,216 41,200 47,185 55,171 64,157 74,143 84,131 95,118 108,107 120,97 134,87 148,78 162,71 177,64 193,58 209,53 225,49 241,47 257,45 274,44 291,45 307,47 323,49 339,53 355,58 371,64 386,71 400,78 414,87 428,97 440,107 453,118 464,131 474,143 484,157 493,171 501,185 507,200 513,216 518,232 523,248 526,264 528,280" fill="#262626"/><polygon points="527,297 528,314 529,331 528,348 528,365 526,383 524,401 521,419 516,437 509,454 500,471 489,486 476,499 462,511 445,520 428,528 411,534 393,539 376,543 359,546 341,549 325,551 308,553 291,553 274,554 257,553 241,551 224,549 207,545 191,540 176,535 160,528 145,520 131,511 118,500 105,489 93,478 82,465 72,452 63,438 55,424 47,409 41,394 35,378 31,362 28,346 25,330 24,313 23,297 24,281 26,264 28,248 32,232 37,217 43,201 50,186 57,172 66,158 75,145 86,132 97,120 109,109 122,99 135,89 149,80 163,73 178,66 194,60 209,55 225,52 241,49 258,47 274,47 290,47 307,49 323,52 339,55 354,60 370,66 385,73 399,80 413,89 426,99 439,109 451,120 462,132 473,145 482,158 491,172 498,186 505,201 511,216 516,232 520,248 523,264 526,280" fill="#313131"/><polygon points="525,297 526,314 526,330 526,347 525,364 524,382 521,399 518,417 513,435 507,453 498,469 487,484 474,497 460,509 444,518 427,526 410,532 392,537 375,540 358,544 341,546 324,548 307,550 291,551 274,551 257,550 241,549 224,546 208,543 192,538 177,532 161,525 147,517 133,508 119,498 107,488 95,476 84,463 74,450 65,437 57,422 49,408 43,393 38,377 33,361 30,346 27,329 26,313 26,297 26,281 28,265 31,249 34,233 39,217 45,202 52,187 59,173 68,159 77,146 88,134 99,122 111,111 123,100 136,91 150,82 164,75 179,68 194,62 210,58 226,54 242,51 258,50 274,49 290,50 306,51 322,54 338,58 354,62 369,68 384,75 398,82 412,91 425,100 437,111 449,122 460,134 471,146 480,159 489,173 496,187 503,202 509,217 514,233 518,248 521,264 523,281" fill="#474747"/><polygon points="522,297 523,313 524,330 523,347 522,364 521,381 519,398 516,416 511,434 504,451 496,467 485,482 472,495 458,507 442,516 425,523 408,529 391,534 374,538 357,541 340,544 323,546 307,547 290,548 274,549 258,548 241,546 225,544 209,540 193,536 178,530 163,523 148,515 134,506 121,496 109,486 97,474 86,462 76,449 67,435 59,421 52,407 45,392 40,376 36,361 32,345 30,329 28,313 28,297 29,281 30,265 33,249 37,233 41,218 47,203 54,188 61,174 70,161 79,148 89,135 100,123 112,112 125,102 138,93 151,84 165,77 180,70 195,65 210,60 226,56 242,54 258,52 274,51 290,52 306,54 322,56 338,60 353,65 368,70 383,77 397,84 410,93 423,102 436,112 448,123 459,135 469,148 478,161 487,174 494,188 501,203 507,218 512,233 516,249 519,265 521,281" fill="#646464"/><polygon points="520,297 521,313 521,330 521,346 520,363 518,380 516,397 513,415 508,432 502,449 494,465 483,480 470,493 456,504 440,514 424,521 407,527 390,531 373,535 356,538 339,541 323,543 307,545 290,546 274,546 258,545 242,544 225,541 209,538 194,533 179,527 164,521 149,513 136,504 123,494 110,484 99,472 88,460 78,447 69,434 61,420 54,406 48,391 42,376 38,360 35,345 32,329 31,313 30,297 31,281 33,265 35,250 39,234 44,219 49,204 56,189 63,175 72,162 81,149 91,137 102,125 114,114 126,104 139,95 152,86 166,79 181,72 196,67 211,62 227,59 242,56 258,54 274,54 290,54 306,56 321,59 337,62 352,67 367,72 382,79 396,86 409,95 422,104 434,114 446,125 457,137 467,149 476,162 485,175 492,189 499,204 504,219 509,234 513,249 516,265 518,281" fill="#828282"/><polygon points="517,297 518,313 518,329 518,346 517,362 515,379 513,396 510,413 506,431 499,448 491,464 481,478 468,491 454,502 438,511 422,518 405,524 388,529 372,532 355,536 339,538 322,541 306,542 290,543 274,543 258,543 242,541 226,539 210,535 195,531 180,525 165,518 151,511 137,502 124,492 112,482 101,470 90,458 80,446 71,432 63,419 56,404 50,390 45,375 40,360 37,344 35,329 33,313 33,297 34,281 35,266 38,250 41,235 46,220 52,205 58,191 66,177 74,163 83,150 93,138 104,127 115,116 127,106 140,97 154,89 168,81 182,75 197,69 212,64 227,61 243,58 258,57 274,56 290,57 305,58 321,61 336,64 351,69 366,75 380,81 394,89 408,97 421,106 433,116 444,127 455,138 465,150 474,163 483,177 490,190 497,205 502,220 507,235 511,250 514,265 516,281" fill="#9f9f9f"/><polygon points="515,297 516,313 516,329 515,345 514,361 513,378 510,395 507,412 503,429 497,446 489,462 478,476 466,489 452,500 436,508 420,515 403,521 387,526 370,530 354,533 338,536 322,538 306,539 290,540 274,541 258,540 242,539 226,536 211,533 196,528 181,523 166,516 152,508 139,500 126,490 114,480 102,469 92,457 82,444 73,431 65,417 58,403 52,389 47,374 43,359 39,344 37,328 36,313 35,297 36,281 38,266 40,250 44,235 48,220 54,206 60,192 68,178 76,165 85,152 95,140 105,128 117,118 129,108 142,99 155,91 169,83 183,77 197,71 212,67 228,63 243,61 258,59 274,59 290,59 305,61 320,63 336,67 351,71 365,77 379,83 393,91 406,99 419,108 431,118 443,128 453,140 463,152 472,165 480,178 488,192 494,206 500,220 505,235 508,250 511,266 514,281" fill="#b5b5b5"/><polygon points="512,297 513,313 513,328 512,344 511,361 510,377 507,394 504,411 500,427 494,444 486,460 476,474 463,486 449,497 434,506 418,513 402,518 385,523 369,527 353,530 337,533 321,535 306,537 290,538 274,538 258,537 243,536 227,533 212,530 196,526 182,520 167,514 153,506 140,497 127,488 115,478 104,467 94,455 84,443 76,430 68,416 61,402 55,388 49,373 45,358 42,343 40,328 38,312 38,297 38,282 40,266 43,251 46,236 51,221 56,207 62,193 70,179 78,166 87,153 97,141 107,130 118,120 130,110 143,101 156,93 170,85 184,79 198,74 213,69 228,66 243,63 259,62 274,61 289,62 305,63 320,66 335,69 350,74 364,79 378,85 392,93 405,101 418,110 430,120 441,130 451,141 461,153 470,166 478,179 486,193 492,207 498,221 502,236 506,251 509,266 511,281" fill="#c0c0c0"/><polygon points="510,297 510,312 510,328 510,344 508,360 507,376 504,392 501,409 497,426 491,442 483,457 473,471 461,484 447,494 432,503 416,510 400,515 384,520 368,524 352,527 336,530 321,532 305,534 290,535 274,535 258,535 243,533 228,531 212,527 197,523 183,518 168,511 155,504 142,495 129,486 117,476 106,465 96,453 86,441 78,428 70,415 63,401 57,387 52,372 48,358 44,343 42,328 41,312 40,297 41,282 42,267 45,251 48,237 53,222 58,208 65,194 72,180 80,167 89,155 99,143 109,132 120,122 132,112 144,103 157,95 171,88 185,81 199,76 214,72 228,68 244,66 259,64 274,64 289,64 304,66 320,68 334,72 349,76 363,81 377,88 391,95 404,103 416,112 428,122 439,132 449,143 459,155 468,167 476,180 483,194 490,208 495,222 500,236 504,251 506,266 508,282" fill="#c0c0c0"/><polygon points="507,297 508,312 507,328 507,343 505,359 504,375 501,391 498,407 493,424 488,440 480,455 470,469 458,481 444,491 430,500 414,507 398,512 382,517 367,521 351,524 336,527 320,529 305,531 289,532 274,532 259,532 243,530 228,528 213,525 198,520 184,515 170,508 156,501 143,493 131,484 119,474 108,463 98,451 89,439 80,427 72,413 65,400 59,386 54,372 50,357 47,342 45,327 43,312 43,297 44,282 45,267 48,252 51,237 55,223 61,209 67,195 74,182 82,169 91,157 101,145 111,134 122,124 134,114 146,105 159,97 172,90 186,84 200,79 214,74 229,71 244,68 259,67 274,66 289,67 304,68 319,71 334,74 348,79 362,84 376,90 389,97 402,105 414,114 426,124 437,134 447,145 457,157 466,169 474,182 481,195 487,209 493,223 497,237 501,252 504,267 506,282" fill="#b5b5b5"/><polygon points="504,297 505,312 505,327 504,343 502,358 500,374 498,390 495,406 490,422 484,437 477,452 467,466 455,478 442,488 427,497 412,504 396,509 381,514 365,518 350,521 335,524 320,526 304,528 289,529 274,529 259,529 244,527 229,525 214,522 199,517 185,512 171,506 158,499 145,490 133,481 121,471 110,461 100,449 91,438 82,425 75,412 68,399 62,385 57,371 53,356 50,342 47,327 46,312 46,297 46,282 48,267 50,252 54,238 58,224 63,210 69,196 76,183 84,170 93,158 103,147 113,136 124,126 135,116 147,107 160,99 173,92 187,86 201,81 215,77 230,73 244,71 259,69 274,69 289,69 304,71 318,73 333,77 347,81 361,86 375,92 388,99 401,107 413,116 424,126 435,136 445,147 455,158 464,170 472,183 479,196 485,210 490,224 495,238 498,252 501,267 503,282" fill="#9f9f9f"/><polygon points="501,297 502,312 502,327 501,342 499,357 497,373 495,388 491,404 487,420 481,435 473,450 464,463 452,475 439,485 425,493 410,500 395,506 379,511 364,515 349,518 334,521 319,523 304,525 289,526 274,526 259,526 244,524 229,522 215,519 200,515 186,509 172,503 159,496 146,488 134,479 123,469 112,459 102,448 93,436 85,423 77,411 70,397 65,384 60,370 56,356 52,341 50,326 49,312 48,297 49,282 50,268 53,253 56,239 61,225 66,211 72,197 79,184 87,172 95,160 105,148 115,138 125,128 137,118 149,110 161,102 174,95 188,89 202,84 216,79 230,76 245,74 259,72 274,72 289,72 303,74 318,76 332,79 346,84 360,89 374,95 387,102 399,110 411,118 423,128 433,138 443,148 453,160 461,172 469,184 476,197 482,211 488,224 492,239 496,253 498,267 500,282" fill="#828282"/><polygon points="499,297 499,312 499,327 498,341 496,357 494,372 491,387 488,402 483,418 477,433 470,447 460,460 449,472 436,482 422,490 408,497 393,503 378,507 363,512 348,515 333,518 318,520 304,522 289,523 274,523 259,523 244,521 230,519 215,516 201,512 187,507 174,500 161,493 148,485 136,477 125,467 114,457 105,446 95,434 87,422 80,409 73,396 67,383 62,369 58,355 55,341 53,326 51,312 51,297 52,282 53,268 56,254 59,239 63,225 68,212 74,199 81,186 89,173 97,161 107,150 117,140 127,130 138,120 150,112 163,104 176,97 189,91 202,86 216,82 231,79 245,76 259,75 274,74 289,75 303,76 317,79 332,82 346,86 359,91 372,97 385,104 398,112 410,120 421,130 431,140 441,150 451,161 459,173 467,186 474,199 480,212 485,225 489,239 493,253 496,268 497,282" fill="#646464"/><polygon points="496,297 496,312 496,326 495,341 493,356 491,371 488,386 484,401 480,416 474,430 466,444 457,457 446,469 433,479 420,487 405,494 391,499 376,504 362,508 347,512 332,515 318,517 303,519 289,520 274,520 259,520 245,518 230,516 216,513 202,509 188,504 175,498 162,491 150,483 138,474 127,465 116,455 107,444 98,432 90,420 82,408 76,395 70,382 65,368 61,354 58,340 56,326 54,311 54,297 54,283 56,268 58,254 62,240 66,226 71,213 77,200 84,187 91,175 100,163 109,152 119,142 129,132 140,123 152,114 164,107 177,100 190,94 203,89 217,85 231,81 245,79 260,78 274,77 288,78 303,79 317,81 331,85 345,89 358,94 371,100 384,107 396,114 408,123 419,132 429,142 439,152 448,163 457,175 464,187 471,200 477,213 482,226 487,240 490,254 493,268 495,283" fill="#474747"/><polygon points="493,297 493,311 493,326 491,340 490,355 487,369 484,384 481,399 476,414 470,428 462,442 453,454 442,465 430,475 417,483 403,490 389,496 375,501 360,505 346,509 332,512 317,514 303,516 288,517 274,517 260,517 245,515 231,513 217,510 203,506 190,501 176,495 164,488 152,480 140,472 129,462 119,452 109,442 100,430 92,419 85,406 78,394 72,380 68,367 64,353 61,339 58,325 57,311 57,297 57,283 59,269 61,255 64,241 68,227 73,214 79,201 86,188 94,176 102,165 111,154 121,144 131,134 142,125 153,117 165,109 178,102 191,96 204,91 218,87 232,84 246,82 260,80 274,80 288,80 302,82 316,84 330,87 344,91 357,96 370,102 383,109 395,117 406,125 417,134 427,144 437,154 446,165 454,176 462,188 469,201 475,214 480,227 484,241 487,255 490,269 492,283" fill="#313131"/><polygon points="490,297 490,311 489,325 488,340 487,354 484,368 481,383 477,397 472,411 466,425 459,439 450,451 439,462 427,472 414,480 401,487 387,493 373,498 359,502 345,506 331,509 317,511 302,513 288,514 274,514 260,514 246,512 232,510 218,507 204,503 191,498 178,492 165,485 153,478 142,469 131,460 121,450 111,440 102,429 94,417 87,405 81,392 75,379 70,366 66,353 63,339 61,325 60,311 60,297 60,283 62,269 64,255 67,242 71,228 76,215 82,202 88,190 96,178 104,167 113,156 123,146 133,136 144,127 155,119 167,111 179,105 192,99 205,94 219,90 232,87 246,85 260,83 274,83 288,83 302,85 316,87 329,90 343,94 356,99 369,105 381,111 393,119 404,127 415,136 425,146 435,156 444,167 452,178 460,190 466,202 472,215 477,228 481,241 484,255 487,269 489,283" fill="#262626"/><polygon points="487,297 487,311 486,325 485,339 483,353 481,367 478,381 473,395 469,409 462,423 455,436 446,448 436,459 424,468 412,476 398,483 385,489 371,494 358,499 344,502 330,506 316,508 302,510 288,511 274,511 260,511 246,509 232,507 219,504 205,500 192,495 179,489 167,483 155,475 144,467 133,458 123,448 114,438 105,427 97,415 90,403 83,391 78,378 73,365 69,352 66,338 64,325 63,311 62,297 63,283 64,269 67,256 70,242 74,229 79,216 84,204 91,191 98,180 106,168 115,158 125,148 135,138 145,129 157,121 168,114 181,107 193,102 206,97 219,93 233,90 246,87 260,86 274,86 288,86 302,87 315,90 329,93 342,97 355,102 367,107 380,114 391,121 403,129 413,138 423,148 433,158 442,168 450,180 457,191 464,204 469,216 474,229 478,242 482,256 484,269 486,283" fill="#262626"/><polygon points="484,297 484,311 483,325 482,338 480,352 477,366 474,380 470,394 465,407 459,420 451,433 443,445 432,455 421,465 409,473 396,480 383,486 370,491 356,495 343,499 329,502 315,505 302,507 288,508 274,508 260,507 246,506 233,504 219,501 206,497 193,492 181,486 168,480 157,472 146,464 135,455 125,446 116,436 107,425 100,414 93,402 86,390 81,377 76,364 72,351 69,338 67,324 66,311 65,297 66,283 67,270 70,256 73,243 77,230 81,217 87,205 94,193 101,181 109,170 117,160 127,150 137,140 147,132 158,124 170,117 182,110 194,105 207,100 220,96 233,93 247,90 260,89 274,89 288,89 301,90 315,93 328,96 341,100 354,105 366,110 378,117 390,124 401,132 411,140 421,150 431,160 439,170 447,181 454,193 461,205 467,217 471,230 475,243 479,256 481,270 483,283" fill="#313131"/><polygon points="480,297 481,311 480,324 479,338 477,351 474,365 470,378 466,392 461,405 455,418 448,430 439,442 429,452 418,461 406,469 394,476 381,482 368,487 355,492 341,496 328,499 315,501 301,503 288,504 274,505 260,504 247,503 233,501 220,498 207,494 194,489 182,483 170,477 159,470 148,462 137,453 127,444 118,433 110,423 102,412 95,400 89,388 84,376 79,363 75,350 72,337 70,324 69,310 69,297 69,284 70,270 73,257 76,244 80,231 84,218 90,206 96,194 103,183 111,172 120,162 129,152 139,143 149,134 160,126 171,119 183,113 195,107 208,103 221,99 234,96 247,93 261,92 274,92 287,92 301,93 314,96 327,99 340,103 353,107 365,113 377,119 388,126 399,134 409,143 419,152 428,162 437,172 445,183 452,194 458,206 464,218 469,231 473,244 476,257 478,270 480,284" fill="#474747"/><polygon points="477,297 477,310 477,324 475,337 473,350 470,364 467,377 462,390 457,403 451,415 444,427 435,438 426,449 415,458 403,466 391,473 379,479 366,484 353,488 340,492 327,496 314,498 301,500 287,501 274,501 261,501 247,500 234,497 221,494 208,491 196,486 184,480 172,474 160,467 150,459 139,450 130,441 121,431 112,421 105,410 98,399 92,387 87,375 82,362 78,349 75,337 73,323 72,310 72,297 72,284 73,271 76,258 79,245 82,232 87,220 93,208 99,196 106,185 114,174 122,164 131,154 141,145 151,137 162,129 173,122 185,116 197,110 209,105 222,102 235,99 248,96 261,95 274,95 287,95 300,96 313,99 326,102 339,105 351,110 363,116 375,122 386,129 397,137 407,145 417,154 426,164 434,174 442,185 449,196 455,208 461,220 466,232 470,245 473,257 475,271 477,284" fill="#646464"/><polygon points="474,297 474,310 473,323 472,336 470,349 467,362 463,375 459,388 454,401 447,413 440,424 432,435 422,445 412,454 401,462 389,469 377,475 364,480 352,485 339,489 326,492 313,495 300,497 287,498 274,498 261,497 248,496 235,494 222,491 209,487 197,483 185,477 173,471 162,464 152,456 142,448 132,439 123,429 115,419 108,408 101,397 95,385 89,373 85,361 81,349 78,336 76,323 75,310 75,297 75,284 76,271 79,258 82,245 85,233 90,221 95,209 102,197 108,186 116,176 124,166 133,156 143,147 153,139 163,131 174,125 186,118 198,113 210,108 222,105 235,102 248,100 261,98 274,98 287,98 300,100 313,102 326,105 338,108 350,113 362,118 374,125 385,131 395,139 405,147 415,156 424,166 432,176 440,186 446,197 453,209 458,221 463,233 467,245 470,258 472,271 473,284" fill="#828282"/><polygon points="471,297 471,310 470,323 468,336 466,348 463,361 460,374 455,386 450,398 444,410 436,422 428,432 419,442 409,451 398,459 387,465 375,472 363,477 350,482 338,486 325,489 313,491 300,493 287,494 274,495 261,494 248,493 235,491 223,488 210,484 198,480 187,474 175,468 164,461 154,454 144,445 134,437 126,427 118,417 110,406 104,395 98,384 92,372 88,360 84,348 82,335 79,323 78,310 78,297 78,284 80,271 82,259 85,246 88,234 93,222 98,210 104,199 111,188 119,178 127,168 135,158 145,150 155,142 165,134 176,127 187,121 199,116 211,111 223,108 236,105 248,103 261,101 274,101 287,101 300,103 312,105 325,108 337,111 349,116 361,121 372,127 383,134 393,142 403,150 413,158 421,168 429,178 437,188 444,199 450,210 455,222 460,234 463,246 466,259 469,271 470,284" fill="#9f9f9f"/><polygon points="467,297 467,310 467,322 465,335 463,348 460,360 456,372 451,384 446,396 440,408 433,419 425,429 416,439 406,447 395,455 384,462 373,468 361,473 349,478 337,482 324,485 312,488 299,490 287,491 274,491 261,491 249,489 236,487 224,485 212,481 200,476 188,471 177,465 166,458 156,451 146,443 137,434 128,425 120,415 113,405 106,394 101,383 95,371 91,359 88,347 85,335 83,322 82,310 81,297 82,284 83,272 85,259 88,247 91,235 96,223 101,212 107,201 114,190 121,180 129,170 138,161 147,152 157,144 167,137 178,130 189,124 200,119 212,114 224,111 236,108 249,106 261,105 274,104 287,105 299,106 312,108 324,111 336,114 348,119 359,124 370,130 381,137 391,144 401,152 410,161 419,170 427,180 434,190 441,201 447,212 452,223 457,235 460,247 463,259 465,272 467,284" fill="#b5b5b5"/><polygon points="464,297 464,309 463,322 461,334 459,347 456,359 452,371 448,383 442,394 436,405 429,416 421,426 412,435 403,444 393,452 382,459 371,465 359,470 348,475 336,479 324,482 311,484 299,486 286,487 274,488 262,487 249,486 237,484 225,481 213,478 201,473 190,468 179,462 168,456 158,448 148,440 139,432 131,423 123,413 116,403 109,392 104,381 99,370 94,358 91,346 88,334 86,322 85,309 84,297 85,285 86,272 88,260 91,248 95,236 99,224 104,213 110,202 116,192 124,182 132,172 140,163 149,155 159,147 169,139 179,133 190,127 201,122 213,118 225,114 237,111 249,109 262,108 274,107 286,108 299,109 311,111 323,114 335,118 347,122 358,127 369,133 379,139 389,147 399,155 408,163 416,172 424,182 432,192 438,202 444,213 449,224 453,236 457,248 460,260 462,272 463,285" fill="#c0c0c0"/><polygon points="461,297 460,309 460,321 458,334 456,346 452,358 449,369 444,381 439,392 433,403 426,413 418,423 409,432 400,441 390,448 380,455 369,461 358,466 346,471 334,475 323,478 311,481 298,483 286,484 274,484 262,484 250,483 237,481 226,478 214,474 202,470 191,465 180,459 170,453 160,445 151,438 142,429 133,420 126,411 119,401 112,390 107,380 102,368 97,357 94,345 91,333 89,321 88,309 88,297 88,285 89,273 91,261 94,249 98,237 102,226 107,215 113,204 119,194 126,184 134,174 142,165 151,157 161,149 171,142 181,136 192,130 203,125 214,121 226,117 238,114 250,112 262,111 274,111 286,111 298,112 310,114 322,117 334,121 345,125 356,130 367,136 377,142 387,149 397,157 406,165 414,174 422,184 429,194 435,204 441,215 446,226 450,237 454,249 457,261 459,273 460,285" fill="#c0c0c0"/><polygon points="457,297 457,309 456,321 454,333 452,345 449,356 445,368 440,379 435,390 429,401 422,411 415,420 406,429 397,437 387,445 377,452 367,458 356,463 345,468 333,472 322,475 310,477 298,479 286,480 274,481 262,480 250,479 238,477 226,474 215,471 204,467 193,462 182,456 172,450 162,443 153,435 144,427 136,418 129,409 122,399 115,389 110,378 105,367 101,356 97,344 95,333 93,321 92,309 91,297 92,285 93,273 95,261 97,250 101,238 105,227 110,216 116,206 122,195 129,186 137,176 145,168 153,160 163,152 172,145 183,139 193,133 204,128 215,124 227,120 238,118 250,116 262,115 274,114 286,115 298,116 310,118 321,120 333,124 344,128 355,133 365,139 376,145 385,152 395,160 403,168 411,176 419,186 426,195 432,206 438,216 443,227 447,238 451,250 453,261 455,273 457,285" fill="#b5b5b5"/><polygon points="454,297 453,309 452,320 451,332 448,344 445,355 441,366 437,377 432,388 425,398 419,408 411,417 403,426 394,434 385,441 375,448 365,454 354,459 343,464 332,468 321,471 309,474 298,476 286,477 274,477 262,477 251,475 239,474 227,471 216,467 205,463 194,458 184,453 174,447 164,440 155,432 147,424 139,416 131,406 125,397 118,387 113,376 108,366 104,355 101,343 98,332 96,320 95,309 95,297 95,285 96,274 98,262 101,251 104,239 108,228 113,218 119,207 125,197 132,188 139,179 147,170 156,162 165,155 174,148 184,142 195,136 205,131 216,127 228,124 239,121 251,119 262,118 274,118 286,118 297,119 309,121 320,124 332,127 343,131 353,136 364,142 374,148 383,155 392,162 401,170 409,179 416,188 423,197 429,207 435,218 440,228 444,239 447,251 450,262 452,274 453,285" fill="#9f9f9f"/><polygon points="450,297 450,309 449,320 447,331 445,343 442,354 438,365 433,376 428,386 422,396 415,405 408,415 400,423 391,431 382,438 373,445 363,451 352,456 342,460 331,464 320,468 308,470 297,472 286,473 274,473 262,473 251,472 240,470 228,467 217,464 207,460 196,455 186,450 176,444 167,437 158,430 149,422 142,413 134,404 128,395 122,385 116,375 111,364 107,354 104,343 101,331 100,320 99,309 98,297 99,285 100,274 102,263 104,251 108,240 112,230 116,219 122,209 128,199 135,190 142,181 150,173 158,165 167,158 176,151 186,145 196,139 207,135 217,131 228,127 240,125 251,123 263,122 274,121 285,122 297,123 308,125 320,127 331,131 341,135 352,139 362,145 372,151 381,158 390,165 398,173 406,181 413,190 420,199 426,209 432,219 436,230 441,240 444,251 447,263 448,274 450,285" fill="#828282"/><polygon points="446,297 446,308 445,320 443,331 441,342 438,353 434,363 430,374 424,384 418,394 412,403 405,412 397,420 389,428 380,435 370,441 361,447 351,452 340,457 330,461 319,464 308,466 297,468 285,469 274,470 263,469 251,468 240,466 229,464 219,460 208,456 198,452 188,446 178,441 169,434 160,427 152,419 144,411 137,402 131,393 125,383 119,373 115,363 111,352 108,342 105,331 103,319 102,308 102,297 102,286 103,275 105,263 108,252 111,242 115,231 120,221 125,211 131,201 137,192 145,183 152,175 160,168 169,160 178,154 188,148 198,143 208,138 219,134 229,131 240,128 252,126 263,125 274,125 285,125 296,126 308,128 319,131 329,134 340,138 350,143 360,148 370,154 379,160 388,168 396,175 403,183 411,192 417,201 423,211 428,221 433,231 437,242 440,252 443,263 445,275 446,286" fill="#646464"/><polygon points="443,297 442,308 441,319 440,330 437,341 434,351 430,362 426,372 421,382 415,391 409,400 402,409 394,417 386,425 377,432 368,438 359,444 349,449 339,453 328,457 318,460 307,463 296,464 285,465 274,466 263,465 252,464 241,463 230,460 220,457 209,453 199,448 190,443 180,437 171,431 163,424 155,416 147,408 140,400 134,391 128,381 123,372 118,362 114,351 111,341 109,330 107,319 106,308 105,297 106,286 107,275 109,264 111,253 114,243 118,232 123,222 128,213 134,203 140,194 147,186 155,178 163,170 171,163 180,157 190,151 199,146 209,141 220,137 230,134 241,132 252,130 263,129 274,128 285,129 296,130 307,132 318,134 328,137 339,141 349,146 358,151 368,157 377,163 385,170 393,178 401,186 408,194 414,203 420,213 425,222 430,232 434,243 437,253 439,264 441,275 442,286" fill="#474747"/><polygon points="439,297 439,308 438,319 436,329 433,340 430,350 427,360 422,370 417,380 412,389 405,398 398,406 391,414 383,421 375,428 366,435 357,440 347,445 337,450 327,453 317,456 306,459 296,461 285,462 274,462 263,462 252,461 242,459 231,456 221,453 211,449 201,445 192,440 182,434 174,428 165,421 157,414 150,406 143,397 137,389 131,379 126,370 122,360 118,350 115,340 112,329 111,319 110,308 109,297 110,286 111,275 112,265 115,254 118,244 122,234 126,224 131,215 137,205 143,197 150,188 157,180 165,173 174,166 182,160 192,154 201,149 211,145 221,141 231,138 242,135 252,134 263,133 274,132 285,133 296,134 306,135 317,138 327,141 337,145 347,149 356,154 366,160 374,166 383,173 391,180 398,188 405,197 411,205 417,215 422,224 426,234 430,244 433,254 436,265 437,275 439,286" fill="#313131"/><polygon points="435,297 435,308 434,318 432,328 430,339 427,349 423,359 419,368 414,378 408,387 402,395 395,403 388,411 380,418 372,425 364,431 355,437 345,442 336,446 326,450 316,453 305,455 295,457 285,458 274,458 263,458 253,457 243,455 232,453 222,450 212,446 203,441 193,436 185,431 176,425 168,418 160,411 153,403 146,395 140,386 135,378 130,368 125,359 122,349 118,339 116,328 114,318 113,308 113,297 113,286 114,276 116,266 119,255 122,245 125,235 130,226 135,217 140,208 146,199 153,191 160,183 168,176 176,169 185,163 194,158 203,153 212,148 222,145 232,142 243,139 253,137 263,136 274,136 285,136 295,137 305,139 316,142 326,145 336,148 345,153 354,158 363,163 372,169 380,176 388,183 395,191 402,199 408,208 413,217 418,226 423,235 426,245 429,255 432,266 434,276 435,286" fill="#262626"/><polygon points="431,297 431,307 430,318 428,328 426,338 423,348 419,357 415,367 410,376 405,384 399,393 392,401 385,408 378,415 370,422 361,428 353,433 343,438 334,442 324,446 315,449 305,451 295,453 284,454 274,454 264,454 253,453 243,451 233,449 224,446 214,442 205,438 195,433 187,428 178,422 170,415 163,408 156,401 149,393 143,384 138,376 133,366 129,357 125,347 122,338 120,328 118,317 117,307 117,297 117,287 118,277 120,266 122,256 125,247 129,237 133,228 138,218 143,210 149,201 156,193 163,186 170,179 178,172 187,166 195,161 205,156 214,152 224,148 233,145 243,143 254,141 264,140 274,140 284,140 294,141 305,143 315,145 324,148 334,152 343,156 353,161 361,166 370,172 378,179 385,186 392,193 399,201 405,210 410,218 415,228 419,237 423,247 426,256 428,266 430,277 431,287" fill="#262626"/><polygon points="428,297 428,307 427,317 425,327 423,337 420,347 416,356 412,365 407,374 402,383 396,391 390,399 383,406 376,413 368,419 360,425 351,430 342,435 333,439 324,443 314,446 304,448 294,450 284,451 274,451 264,451 254,450 244,448 234,446 224,443 215,439 206,435 197,430 188,425 180,419 172,413 165,406 158,399 152,391 146,383 141,374 136,365 132,356 128,347 125,337 123,327 121,317 120,307 120,297 120,287 121,277 123,267 125,257 128,247 132,238 136,229 141,220 146,211 152,203 158,195 165,188 172,181 180,175 188,169 197,164 206,159 215,155 224,151 234,148 244,146 254,144 264,143 274,143 284,143 294,144 304,146 314,148 324,151 333,155 342,159 351,164 360,169 368,175 376,181 383,188 390,195 396,203 402,211 407,220 412,229 416,238 420,247 423,257 425,267 427,277 428,287" fill="#313131"/><polygon points="425,297 425,307 424,317 422,326 420,336 417,346 413,355 409,364 405,372 400,381 394,389 387,397 381,404 374,410 366,417 358,423 349,428 341,432 332,436 323,440 313,443 303,445 294,447 284,448 274,448 264,448 254,447 245,445 235,443 225,440 216,436 207,432 199,428 190,423 182,417 174,410 167,404 161,397 154,389 148,381 143,372 139,364 135,355 131,346 128,336 126,326 124,317 123,307 123,297 123,287 124,277 126,268 128,258 131,248 135,239 139,230 143,222 148,213 154,205 161,197 167,190 174,184 182,177 190,171 199,166 207,162 216,158 225,154 235,151 245,149 254,147 264,146 274,146 284,146 294,147 303,149 313,151 323,154 332,158 341,162 349,166 358,171 366,177 374,184 381,190 387,197 394,205 400,213 405,222 409,230 413,239 417,248 420,258 422,268 424,277 425,287" fill="#474747"/><polygon points="422,297 421,307 421,316 419,326 417,335 414,345 411,354 407,362 402,371 397,379 391,387 385,394 379,402 371,408 364,414 356,420 348,425 339,430 331,434 322,437 312,440 303,442 293,444 284,444 274,445 264,444 255,444 245,442 236,440 226,437 217,434 209,430 200,425 192,420 184,414 177,408 169,402 163,394 157,387 151,379 146,371 141,362 137,354 134,345 131,335 129,326 127,316 127,307 126,297 127,287 127,278 129,268 131,259 134,249 137,240 141,232 146,223 151,215 157,207 163,200 169,192 177,186 184,180 192,174 200,169 209,164 217,160 226,157 236,154 245,152 255,150 264,150 274,149 284,150 293,150 303,152 312,154 322,157 331,160 339,164 348,169 356,174 364,180 371,186 379,192 385,200 391,207 397,215 402,223 407,232 411,240 414,249 417,259 419,268 421,278 421,287" fill="#646464"/><polygon points="419,297 418,306 417,316 416,325 414,334 411,343 408,352 404,361 399,369 394,377 389,385 383,392 376,399 369,406 362,412 354,417 346,422 338,427 329,431 320,434 311,437 302,439 293,440 283,441 274,442 265,441 255,440 246,439 237,437 228,434 219,431 210,427 202,422 194,417 186,412 179,406 172,399 165,392 159,385 154,377 149,369 144,361 140,352 137,343 134,334 132,325 131,316 130,306 129,297 130,288 131,278 132,269 134,260 137,251 140,242 144,233 149,225 154,217 159,209 165,202 172,195 179,188 186,182 194,177 202,172 210,167 219,163 228,160 237,157 246,155 255,154 265,153 274,152 283,153 293,154 302,155 311,157 320,160 329,163 338,167 346,172 354,177 362,182 369,188 376,195 383,202 389,209 394,217 399,225 404,233 408,242 411,251 414,260 416,269 417,278 418,288" fill="#828282"/><polygon points="415,297 415,306 414,315 413,325 411,334 408,342 405,351 401,360 396,368 392,376 386,383 380,390 374,397 367,403 360,409 353,415 345,419 337,424 328,428 319,431 311,434 302,436 292,437 283,438 274,438 265,438 256,437 246,436 237,434 229,431 220,428 211,424 203,419 195,415 188,409 181,403 174,397 168,390 162,383 156,376 152,368 147,360 143,351 140,342 137,334 135,325 134,315 133,306 133,297 133,288 134,279 135,269 137,260 140,252 143,243 147,234 152,226 156,218 162,211 168,204 174,197 181,191 188,185 195,179 203,175 211,170 220,166 229,163 237,160 246,158 256,157 265,156 274,156 283,156 292,157 302,158 311,160 319,163 328,166 337,170 345,175 353,179 360,185 367,191 374,197 380,204 386,211 392,218 396,226 401,234 405,243 408,252 411,260 413,269 414,279 415,288" fill="#9f9f9f"/><polygon points="412,297 412,306 411,315 409,324 407,333 405,341 401,350 398,358 393,366 389,374 383,381 378,388 372,395 365,401 358,406 351,412 343,416 335,421 327,424 318,428 310,430 301,432 292,434 283,435 274,435 265,435 256,434 247,432 238,430 230,428 221,424 213,421 205,416 197,412 190,406 183,401 176,395 170,388 165,381 159,374 155,366 150,358 147,350 143,341 141,333 139,324 137,315 136,306 136,297 136,288 137,279 139,270 141,261 143,253 147,244 150,236 155,228 159,220 165,213 170,206 176,199 183,193 190,188 197,182 205,178 213,173 221,170 230,166 238,164 247,162 256,160 265,159 274,159 283,159 292,160 301,162 310,164 318,166 327,170 335,173 343,178 351,182 358,188 365,193 372,199 378,206 383,213 389,220 393,228 398,236 401,244 405,253 407,261 409,270 411,279 412,288" fill="#b5b5b5"/><polygon points="409,297 408,306 407,315 406,323 404,332 401,340 398,348 395,357 391,364 386,372 381,379 375,386 369,392 363,398 356,404 349,409 341,414 334,418 325,421 317,424 309,427 300,429 292,430 283,431 274,432 265,431 256,430 248,429 239,427 231,424 223,421 214,418 207,414 199,409 192,404 185,398 179,392 173,386 167,379 162,372 157,364 153,357 150,348 147,340 144,332 142,323 141,315 140,306 139,297 140,288 141,279 142,271 144,262 147,254 150,246 153,237 157,230 162,222 167,215 173,208 179,202 185,196 192,190 199,185 207,180 214,176 223,173 231,170 239,167 248,165 256,164 265,163 274,162 283,163 292,164 300,165 309,167 317,170 325,173 334,176 341,180 349,185 356,190 363,196 369,202 375,208 381,215 386,222 391,230 395,237 398,246 401,254 404,262 406,271 407,279 408,288" fill="#c0c0c0"/><polygon points="405,297 405,306 404,314 402,323 401,331 398,339 395,347 391,355 387,362 383,370 378,377 372,383 367,390 360,395 354,401 347,406 339,410 332,414 324,418 316,421 308,424 300,425 291,427 283,428 274,428 265,428 257,427 248,425 240,424 232,421 224,418 216,414 209,410 201,406 194,401 188,395 181,390 176,383 170,377 165,370 161,362 157,355 153,347 150,339 147,331 146,323 144,314 143,306 143,297 143,288 144,280 146,271 147,263 150,255 153,247 157,239 161,232 165,224 170,217 176,211 181,204 188,199 194,193 201,188 209,184 216,180 224,176 232,173 240,170 248,169 257,167 265,166 274,166 283,166 291,167 300,169 308,170 316,173 324,176 332,180 339,184 347,188 354,193 360,199 367,204 372,211 378,217 383,224 387,232 391,239 395,247 398,255 401,263 402,271 404,280 405,288" fill="#c0c0c0"/><polygon points="398,297 397,305 397,313 395,321 393,329 391,337 388,344 385,352 381,359 377,366 372,372 367,379 361,384 356,390 349,395 343,400 336,404 329,408 321,411 314,414 306,416 298,418 290,420 282,420 274,421 266,420 258,420 250,418 242,416 234,414 227,411 219,408 212,404 205,400 199,395 192,390 187,384 181,379 176,372 171,366 167,359 163,352 160,344 157,337 155,329 153,321 151,313 151,305 150,297 151,289 151,281 153,273 155,265 157,257 160,250 163,242 167,235 171,228 176,222 181,215 187,210 192,204 199,199 205,194 212,190 219,186 227,183 234,180 242,178 250,176 258,174 266,174 274,173 282,174 290,174 298,176 306,178 314,180 321,183 329,186 336,190 343,194 349,199 356,204 361,210 367,215 372,222 377,228 381,235 385,242 388,250 391,257 393,265 395,273 397,281 397,289" fill="#b5b5b5"/><polygon points="390,297 390,305 389,312 388,320 386,327 384,334 381,341 378,348 374,355 370,361 366,367 361,373 356,379 350,384 344,389 338,393 332,397 325,401 318,404 311,407 304,409 297,411 289,412 282,413 274,413 266,413 259,412 251,411 244,409 237,407 230,404 223,401 216,397 210,393 204,389 198,384 192,379 187,373 182,367 178,361 174,355 170,348 167,341 164,334 162,327 160,320 159,312 158,305 158,297 158,289 159,282 160,274 162,267 164,260 167,253 170,246 174,239 178,233 182,227 187,221 192,215 198,210 204,205 210,201 216,197 223,193 230,190 237,187 244,185 251,183 259,182 266,181 274,181 282,181 289,182 297,183 304,185 311,187 318,190 325,193 332,197 338,201 344,205 350,210 356,215 361,221 366,227 370,233 374,239 378,246 381,253 384,260 386,267 388,274 389,282 390,289" fill="#9f9f9f"/><polygon points="381,297 381,304 380,311 379,318 378,325 376,332 373,338 370,345 367,351 363,357 359,362 355,368 350,373 345,378 339,382 334,386 328,390 322,393 315,396 309,399 302,401 295,402 288,403 281,404 274,404 267,404 260,403 253,402 246,401 239,399 233,396 226,393 220,390 214,386 209,382 203,378 198,373 193,368 189,362 185,357 181,351 178,345 175,338 172,332 170,325 169,318 168,311 167,304 167,297 167,290 168,283 169,276 170,269 172,262 175,256 178,249 181,243 185,237 189,232 193,226 198,221 203,216 209,212 214,208 220,204 226,201 233,198 239,195 246,193 253,192 260,191 267,190 274,190 281,190 288,191 295,192 302,193 309,195 315,198 322,201 328,204 334,208 339,212 345,216 350,221 355,226 359,232 363,237 367,243 370,249 373,256 376,262 378,269 379,276 380,283 381,290" fill="#828282"/><polygon points="372,297 372,303 371,310 370,316 369,322 367,329 365,335 362,340 359,346 356,352 352,357 348,362 344,367 339,371 334,375 329,379 323,382 317,385 312,388 306,390 299,392 293,393 287,394 280,395 274,395 268,395 261,394 255,393 249,392 242,390 236,388 231,385 225,382 219,379 214,375 209,371 204,367 200,362 196,357 192,352 189,346 186,340 183,335 181,329 179,322 178,316 177,310 176,303 176,297 176,291 177,284 178,278 179,272 181,265 183,259 186,254 189,248 192,242 196,237 200,232 204,227 209,223 214,219 219,215 225,212 231,209 236,206 242,204 249,202 255,201 261,200 268,199 274,199 280,199 287,200 293,201 299,202 306,204 312,206 317,209 323,212 329,215 334,219 339,223 344,227 348,232 352,237 356,242 359,248 362,254 365,259 367,265 369,272 370,278 371,284 372,291" fill="#646464"/><polygon points="362,297 362,303 361,309 361,314 359,320 358,325 356,331 353,336 350,341 347,346 344,351 340,355 336,359 332,363 328,367 323,370 318,373 313,376 308,379 302,381 297,382 291,384 286,384 280,385 274,385 268,385 262,384 257,384 251,382 246,381 240,379 235,376 230,373 225,370 220,367 216,363 212,359 208,355 204,351 201,346 198,341 195,336 192,331 190,325 189,320 187,314 187,309 186,303 186,297 186,291 187,285 187,280 189,274 190,269 192,263 195,258 198,253 201,248 204,243 208,239 212,235 216,231 220,227 225,224 230,221 235,218 240,215 246,213 251,212 257,210 262,210 268,209 274,209 280,209 286,210 291,210 297,212 302,213 308,215 313,218 318,221 323,224 328,227 332,231 336,235 340,239 344,243 347,248 350,253 353,258 356,263 358,269 359,274 361,280 361,285 362,291" fill="#474747"/><polygon points="351,297 351,302 350,307 349,312 348,317 347,322 345,326 343,331 341,335 338,340 335,344 332,348 328,351 325,355 321,358 317,361 312,364 308,366 303,368 299,370 294,371 289,372 284,373 279,374 274,374 269,374 264,373 259,372 254,371 249,370 245,368 240,366 236,364 231,361 227,358 223,355 220,351 216,348 213,344 210,340 207,335 205,331 203,326 201,322 200,317 199,312 198,307 197,302 197,297 197,292 198,287 199,282 200,277 201,272 203,268 205,263 207,259 210,254 213,250 216,246 220,243 223,239 227,236 231,233 236,230 240,228 245,226 249,224 254,223 259,222 264,221 269,220 274,220 279,220 284,221 289,222 294,223 299,224 303,226 308,228 312,230 317,233 321,236 325,239 328,243 332,246 335,250 338,254 341,259 343,263 345,268 347,272 348,277 349,282 350,287 351,292" fill="#313131"/><polygon points="338,297 337,301 337,305 336,309 335,313 334,317 333,321 331,325 329,329 327,332 324,336 322,339 319,342 316,345 313,347 309,350 306,352 302,354 298,356 294,357 290,358 286,359 282,360 278,360 274,361 270,360 266,360 262,359 258,358 254,357 250,356 246,354 242,352 239,350 235,347 232,345 229,342 226,339 224,336 221,332 219,329 217,325 215,321 214,317 213,313 212,309 211,305 211,301 210,297 211,293 211,289 212,285 213,281 214,277 215,273 217,269 219,265 221,262 224,258 226,255 229,252 232,249 235,247 239,244 242,242 246,240 250,238 254,237 258,236 262,235 266,234 270,234 274,233 278,234 282,234 286,235 290,236 294,237 298,238 302,240 306,242 309,244 313,247 316,249 319,252 322,255 324,258 327,262 329,265 331,269 333,273 334,277 335,281 336,285 337,289 337,293" fill="#262626"/><polygon points="320.5,297.0 320.4,300.0 320.1,303.1 319.6,306.1 318.9,309.0 318.0,311.9 316.9,314.8 315.7,317.6 314.3,320.2 312.7,322.8 310.9,325.3 309.0,327.7 306.9,329.9 304.7,332.0 302.3,333.9 299.8,335.7 297.2,337.3 294.6,338.7 291.8,339.9 288.9,341.0 286.0,341.9 283.1,342.6 280.1,343.1 277.0,343.4 274.0,343.5 271.0,343.4 267.9,343.1 264.9,342.6 262.0,341.9 259.1,341.0 256.2,339.9 253.4,338.7 250.8,337.3 248.2,335.7 245.7,333.9 243.3,332.0 241.1,329.9 239.0,327.7 237.1,325.3 235.3,322.8 233.7,320.2 232.3,317.6 231.1,314.8 230.0,311.9 229.1,309.0 228.4,306.1 227.9,303.1 227.6,300.0 227.5,297.0 227.6,294.0 227.9,290.9 228.4,287.9 229.1,285.0 230.0,282.1 231.1,279.2 232.3,276.4 233.7,273.8 235.3,271.2 237.1,268.7 239.0,266.3 241.1,264.1 243.3,262.0 245.7,260.1 248.2,258.3 250.8,256.7 253.4,255.3 256.2,254.1 259.1,253.0 262.0,252.1 264.9,251.4 267.9,250.9 271.0,250.6 274.0,250.5 277.0,250.6 280.1,250.9 283.1,251.4 286.0,252.1 288.9,253.0 291.8,254.1 294.6,255.3 297.2,256.7 299.8,258.3 302.3,260.1 304.7,262.0 306.9,264.1 309.0,266.3 310.9,268.7 312.7,271.2 314.3,273.8 315.7,276.4 316.9,279.2 318.0,282.1 318.9,285.0 319.6,287.9 320.1,290.9 320.4,294.0" fill="#262626"/><polygon points="290.9,297.0 290.9,298.1 290.8,299.2 290.6,300.3 290.3,301.4 290.0,302.4 289.6,303.5 289.2,304.5 288.6,305.5 288.1,306.4 287.4,307.3 286.7,308.2 286.0,309.0 285.2,309.7 284.3,310.4 283.4,311.1 282.5,311.6 281.5,312.2 280.5,312.6 279.4,313.0 278.4,313.3 277.3,313.6 276.2,313.8 275.1,313.9 274.0,313.9 272.9,313.9 271.8,313.8 270.7,313.6 269.6,313.3 268.6,313.0 267.5,312.6 266.5,312.2 265.5,311.6 264.6,311.1 263.7,310.4 262.8,309.7 262.0,309.0 261.3,308.2 260.6,307.3 259.9,306.4 259.4,305.5 258.8,304.5 258.4,303.5 258.0,302.4 257.7,301.4 257.4,300.3 257.2,299.2 257.1,298.1 257.1,297.0 257.1,295.9 257.2,294.8 257.4,293.7 257.7,292.6 258.0,291.6 258.4,290.5 258.8,289.5 259.4,288.5 259.9,287.6 260.6,286.7 261.3,285.8 262.0,285.0 262.8,284.3 263.7,283.6 264.6,282.9 265.5,282.4 266.5,281.8 267.5,281.4 268.6,281.0 269.6,280.7 270.7,280.4 271.8,280.2 272.9,280.1 274.0,280.1 275.1,280.1 276.2,280.2 277.3,280.4 278.4,280.7 279.4,281.0 280.5,281.4 281.5,281.8 282.5,282.4 283.4,282.9 284.3,283.6 285.2,284.3 286.0,285.0 286.7,285.8 287.4,286.7 288.1,287.6 288.6,288.5 289.2,289.5 289.6,290.5 290.0,291.6 290.3,292.6 290.6,293.7 290.8,294.8 290.9,295.9" fill="#313131"/></g><circle cx="266.4" cy="278.0" r="125.5" fill="url(#fi)"/><rect width="534" height="534" fill="url(#tilt)"/><circle cx="215.0" cy="72.0" r="1.8" fill="#161616" fill-opacity="0.85"/><circle cx="390.5" cy="284.0" r="1.4" fill="#161616" fill-opacity="0.85"/><circle cx="362.5" cy="356.0" r="2.0" fill="#161616" fill-opacity="0.85"/><circle cx="310.0" cy="392.0" r="1.3" fill="#161616" fill-opacity="0.85"/><circle cx="232.0" cy="389.0" r="1.0" fill="#161616" fill-opacity="0.85"/><circle cx="304.0" cy="160.0" r="1.6" fill="#161616" fill-opacity="0.85"/><circle cx="389.0" cy="260.0" r="1.1" fill="#161616" fill-opacity="0.85"/></g></svg></div>
<div id="vsplit1"><div class="abs" style="left:0;top:260px;width:4px;height:14px;background:#8a8a8a"></div></div>
<div id="plots"><svg style="left:0;top:0" width="532" height="266" viewBox="0 0 532 266"><defs><radialGradient id="ym" gradientUnits="userSpaceOnUse" cx="179" cy="99" r="134"><stop offset="0.000" stop-color="#ffff00"/><stop offset="0.050" stop-color="#fefe00"/><stop offset="0.100" stop-color="#fcfc00"/><stop offset="0.150" stop-color="#f9f900"/><stop offset="0.200" stop-color="#f5f500"/><stop offset="0.250" stop-color="#efef00"/><stop offset="0.300" stop-color="#e8e800"/><stop offset="0.350" stop-color="#e0e000"/><stop offset="0.400" stop-color="#d6d600"/><stop offset="0.450" stop-color="#cbcb00"/><stop offset="0.500" stop-color="#bfbf00"/><stop offset="0.550" stop-color="#b2b200"/><stop offset="0.600" stop-color="#a3a300"/><stop offset="0.650" stop-color="#939300"/><stop offset="0.700" stop-color="#828200"/><stop offset="0.750" stop-color="#707000"/><stop offset="0.800" stop-color="#5c5c00"/><stop offset="0.850" stop-color="#474700"/><stop offset="0.900" stop-color="#303000"/><stop offset="0.950" stop-color="#191900"/><stop offset="1.000" stop-color="#000000"/></radialGradient><clipPath id="pc"><rect width="532" height="266"/></clipPath></defs><g clip-path="url(#pc)"><rect x="81" y="0" width="164" height="164" fill="url(#ym)"/><path d="M0 168.5H336.5V0" stroke="#c0c0c0" stroke-width="1" stroke-dasharray="3 2" fill="none"/><path d="M0 187.5H373.5V0" stroke="#c0c0c0" stroke-width="1" stroke-dasharray="3 2" fill="none"/><path d="M0 206.5H411.5V0" stroke="#c0c0c0" stroke-width="1" stroke-dasharray="3 2" fill="none"/><path d="M0 224.5H450.5V0" stroke="#c0c0c0" stroke-width="1" stroke-dasharray="3 2" fill="none"/><path d="M0 244.5H488.5V0" stroke="#c0c0c0" stroke-width="1" stroke-dasharray="3 2" fill="none"/><path d="M0 263.5H526.5V0" stroke="#c0c0c0" stroke-width="1" stroke-dasharray="3 2" fill="none"/><path d="M328.0 82.5H532" stroke="#c0c0c0" stroke-width="1" stroke-dasharray="3 2" fill="none"/><path d="M163.5 164V266" stroke="#c0c0c0" stroke-width="1" stroke-dasharray="3 2" fill="none"/><path d="M0 164.5H532" stroke="#222" stroke-width="1"/><path d="M328.5 0V266" stroke="#222" stroke-width="1"/><path d="M163.5 0V164" stroke="#1414e0" stroke-width="1"/><path d="M81 82.3H245" stroke="#20e020" stroke-width="1.2"/><circle cx="163.6" cy="82.3" r="41.3" fill="none" stroke="#f03c10" stroke-width="1"/><g stroke="#0a8a1e" stroke-width="2" fill="none"><circle cx="163.6" cy="82.3" r="5"/><path d="M156.6 82.3h14M163.6 75.3v14"/></g><g stroke="#f01010" stroke-width="2" fill="none"><rect x="175.1" y="94.8" width="9" height="9"/><path d="M172.1 99.3h15M179.6 91.8v15"/></g><polyline points="532.0,0.0 527.9,1.0 523.8,2.0 519.8,3.0 515.8,4.0 511.8,5.0 507.9,6.0 504.0,7.0 500.2,8.0 496.4,9.0 492.7,10.0 489.0,11.0 485.3,12.0 481.7,13.0 478.1,14.0 474.6,15.0 471.1,16.0 467.7,17.0 464.3,18.0 460.9,19.0 457.6,20.0 454.3,21.0 451.0,22.0 447.9,23.0 444.7,24.0 441.6,25.0 438.5,26.0 435.5,27.0 432.5,28.0 429.6,29.0 426.7,30.0 423.8,31.0 421.0,32.0 418.2,33.0 415.5,34.0 412.8,35.0 410.1,36.0 407.5,37.0 405.0,38.0 402.4,39.0 400.0,40.0 397.5,41.0 395.1,42.0 392.8,43.0 390.5,44.0 388.2,45.0 386.0,46.0 383.8,47.0 381.6,48.0 379.5,49.0 377.5,50.0 375.4,51.0 373.5,52.0 371.5,53.0 369.6,54.0 367.8,55.0 366.0,56.0 364.2,57.0 362.5,58.0 360.8,59.0 359.2,60.0 357.6,61.0 356.0,62.0 354.5,63.0 353.0,64.0 351.6,65.0 350.2,66.0 348.9,67.0 347.6,68.0 346.3,69.0 345.1,70.0 343.9,71.0 342.8,72.0 341.7,73.0 340.6,74.0 339.6,75.0 338.6,76.0 337.7,77.0 336.8,78.0 336.0,79.0 335.2,80.0 334.4,81.0 333.7,82.0 333.1,83.0 332.4,84.0 331.8,85.0 331.3,86.0 330.8,87.0 330.3,88.0 329.9,89.0 329.5,90.0 329.2,91.0 328.9,92.0 328.6,93.0 328.4,94.0 328.3,95.0 328.1,96.0 328.0,97.0 328.0,98.0 328.0,99.0 328.0,100.0 328.1,101.0 328.3,102.0 328.4,103.0 328.6,104.0 328.9,105.0 329.2,106.0 329.5,107.0 329.9,108.0 330.4,109.0 330.8,110.0 331.4,111.0 331.9,112.0 332.5,113.0 333.2,114.0 333.8,115.0 334.6,116.0 335.3,117.0 336.2,118.0 337.0,119.0 337.9,120.0 338.9,121.0 339.8,122.0 340.9,123.0 341.9,124.0 343.1,125.0 344.2,126.0 345.4,127.0 346.7,128.0 347.9,129.0 349.3,130.0 350.7,131.0 352.1,132.0 353.5,133.0 355.0,134.0 356.6,135.0 358.2,136.0 359.8,137.0 361.5,138.0 363.2,139.0 364.9,140.0 366.7,141.0 368.6,142.0 370.5,143.0 372.4,144.0 374.4,145.0 376.4,146.0 378.4,147.0 380.5,148.0 382.7,149.0 384.9,150.0 387.1,151.0 389.4,152.0 391.7,153.0 394.1,154.0 396.5,155.0 398.9,156.0 401.4,157.0 403.9,158.0 406.5,159.0 409.1,160.0 411.8,161.0 414.5,162.0 417.2,163.0 420.0,164.0" fill="none" stroke="#1212f0" stroke-width="2.1"/><polyline points="80.0,258.6 81.0,256.6 82.0,254.6 83.0,252.7 84.0,250.8 85.0,248.9 86.0,247.0 87.0,245.1 88.0,243.3 89.0,241.4 90.0,239.6 91.0,237.9 92.0,236.1 93.0,234.4 94.0,232.7 95.0,231.0 96.0,229.3 97.0,227.7 98.0,226.0 99.0,224.4 100.0,222.8 101.0,221.3 102.0,219.7 103.0,218.2 104.0,216.7 105.0,215.2 106.0,213.8 107.0,212.3 108.0,210.9 109.0,209.5 110.0,208.2 111.0,206.8 112.0,205.5 113.0,204.2 114.0,202.9 115.0,201.6 116.0,200.4 117.0,199.2 118.0,198.0 119.0,196.8 120.0,195.6 121.0,194.5 122.0,193.4 123.0,192.3 124.0,191.2 125.0,190.2 126.0,189.2 127.0,188.2 128.0,187.2 129.0,186.2 130.0,185.3 131.0,184.3 132.0,183.4 133.0,182.6 134.0,181.7 135.0,180.9 136.0,180.1 137.0,179.3 138.0,178.5 139.0,177.7 140.0,177.0 141.0,176.3 142.0,175.6 143.0,175.0 144.0,174.3 145.0,173.7 146.0,173.1 147.0,172.5 148.0,172.0 149.0,171.4 150.0,170.9 151.0,170.4 152.0,169.9 153.0,169.5 154.0,169.1 155.0,168.7 156.0,168.3 157.0,167.9 158.0,167.6 159.0,167.3 160.0,167.0 161.0,166.7 162.0,166.4 163.0,166.2 164.0,166.0 165.0,165.8 166.0,165.6 167.0,165.5 168.0,165.3 169.0,165.2 170.0,165.1 171.0,165.1 172.0,165.0 173.0,165.0 174.0,165.0 175.0,165.0 176.0,165.1 177.0,165.1 178.0,165.2 179.0,165.3 180.0,165.4 181.0,165.6 182.0,165.7 183.0,165.9 184.0,166.1 185.0,166.4 186.0,166.6 187.0,166.9 188.0,167.2 189.0,167.5 190.0,167.8 191.0,168.1 192.0,168.5 193.0,168.9 194.0,169.3 195.0,169.7 196.0,170.2 197.0,170.7 198.0,171.2 199.0,171.7 200.0,172.2 201.0,172.7 202.0,173.3 203.0,173.9 204.0,174.5 205.0,175.2 206.0,175.8 207.0,176.5 208.0,177.2 209.0,177.9 210.0,178.7 211.0,179.4 212.0,180.2 213.0,181.0 214.0,181.8 215.0,182.6 216.0,183.5 217.0,184.4 218.0,185.3 219.0,186.2 220.0,187.2 221.0,188.1 222.0,189.1 223.0,190.1 224.0,191.1 225.0,192.2 226.0,193.2 227.0,194.3 228.0,195.4 229.0,196.6 230.0,197.7 231.0,198.9 232.0,200.1 233.0,201.3 234.0,202.5 235.0,203.8 236.0,205.0 237.0,206.3 238.0,207.6 239.0,209.0 240.0,210.3 241.0,211.7 242.0,213.1 243.0,214.5 244.0,215.9 245.0,217.4" fill="none" stroke="#0a8a1e" stroke-width="2.1"/><rect x="330" y="167.5" width="44" height="11" fill="#fff"/><text x="331" y="176.4" font-family="Liberation Sans, sans-serif" font-size="9.5" fill="#111" textLength="42.5" lengthAdjust="spacingAndGlyphs">-4200.0nm</text><rect x="330" y="186.5" width="44" height="11" fill="#fff"/><text x="331" y="195.4" font-family="Liberation Sans, sans-serif" font-size="9.5" fill="#111" textLength="42.5" lengthAdjust="spacingAndGlyphs">-4400.0nm</text><rect x="330" y="205.5" width="44" height="11" fill="#fff"/><text x="331" y="214.4" font-family="Liberation Sans, sans-serif" font-size="9.5" fill="#111" textLength="42.5" lengthAdjust="spacingAndGlyphs">-4600.0nm</text><rect x="330" y="224.0" width="44" height="11" fill="#fff"/><text x="331" y="232.9" font-family="Liberation Sans, sans-serif" font-size="9.5" fill="#111" textLength="42.5" lengthAdjust="spacingAndGlyphs">-4800.0nm</text><rect x="330" y="243.0" width="44" height="11" fill="#fff"/><text x="331" y="251.9" font-family="Liberation Sans, sans-serif" font-size="9.5" fill="#111" textLength="42.5" lengthAdjust="spacingAndGlyphs">-5000.0nm</text><rect x="330" y="262.0" width="44" height="11" fill="#fff"/><text x="331" y="270.9" font-family="Liberation Sans, sans-serif" font-size="9.5" fill="#111" textLength="42.5" lengthAdjust="spacingAndGlyphs">-5200.0nm</text></g></svg></div>
<div id="strip"></div>
<div id="view3d"><svg style="left:0;top:0" width="532" height="265" viewBox="0 0 532 265"><defs><radialGradient id="hm" gradientUnits="userSpaceOnUse" cx="298" cy="228" r="260" fx="285" fy="145" gradientTransform="translate(285 0) scale(1.10 1) translate(-285 0)"><stop offset="0.000" stop-color="#e60a00"/><stop offset="0.080" stop-color="#e60c00"/><stop offset="0.200" stop-color="#e62c00"/><stop offset="0.320" stop-color="#ea4c00"/><stop offset="0.430" stop-color="#f07c00"/><stop offset="0.520" stop-color="#e8c000"/><stop offset="0.600" stop-color="#d8e000"/><stop offset="0.680" stop-color="#98d000"/><stop offset="0.760" stop-color="#40b400"/><stop offset="0.840" stop-color="#10a010"/><stop offset="0.920" stop-color="#0c9c10"/><stop offset="1.000" stop-color="#089818"/></radialGradient><clipPath id="vc"><rect width="532" height="265"/></clipPath><clipPath id="sc"><path d="M133.3 22.5 C178.0 7.0 218.0 2.0 257.5 2.5 C333.0 3.0 408.0 23.0 465.8 50.5 C470.0 71.0 470.0 91.0 469.0 121.0 L457.0 265.0 L40.5 265.0 C50.0 221.0 58.0 191.0 72.0 148.5 C83.0 116.0 98.0 81.0 133.3 22.5Z"/></clipPath><radialGradient id="fe" cx="0.5" cy="0.5" r="0.5"><stop offset="0.86" stop-color="#000" stop-opacity="0"/><stop offset="0.97" stop-color="#000" stop-opacity="0.10"/><stop offset="1" stop-color="#000" stop-opacity="0"/></radialGradient><radialGradient id="bluec" cx="0.5" cy="0.5" r="0.5"><stop offset="0" stop-color="#0038b8" stop-opacity="1"/><stop offset="0.35" stop-color="#0050a0" stop-opacity="0.85"/><stop offset="0.7" stop-color="#008060" stop-opacity="0.4"/><stop offset="1" stop-color="#009040" stop-opacity="0"/></radialGradient><linearGradient id="shade" x1="0" y1="0" x2="0" y2="1"><stop offset="0" stop-color="#000" stop-opacity="0.22"/><stop offset="0.2" stop-color="#201000" stop-opacity="0.2"/><stop offset="0.5" stop-color="#000" stop-opacity="0"/></linearGradient></defs><g clip-path="url(#vc)"><g clip-path="url(#sc)"><rect width="532" height="265" fill="url(#hm)"/><rect width="532" height="265" fill="url(#shade)"/><circle cx="126.0" cy="17.0" r="58" fill="url(#bluec)"/><circle cx="470.0" cy="49.0" r="16" fill="url(#bluec)"/><ellipse cx="268.0" cy="125.0" rx="106" ry="85" fill="none" stroke="#5a3a00" stroke-opacity="0.26" stroke-width="1.2"/><ellipse cx="268.0" cy="126.0" rx="109" ry="88" fill="none" stroke="#fff" stroke-opacity="0.10" stroke-width="3"/></g></g></svg></div>
<div id="hsplit1"><div class="abs" style="left:660px;top:0;width:14px;height:4px;background:#8a8a8a"></div></div>
<div id="summary"><div class="t" id="sumtitle" style="left:20px;top:9px;font-size:13px;color:#333;letter-spacing:-0.4px">Summary Report on 10 measurements</div><svg style="left:1279px;top:6px" width="18" height="18" viewBox="0 0 24 24"><path fill="#444" d="M19.140 12.940c.040-.300.060-.610.060-.940s-.020-.640-.070-.940l2.030-1.580a.490.490 0 0 0 .120-.610l-1.920-3.320a.488.488 0 0 0-.590-.220l-2.390.960c-.500-.380-1.030-.700-1.620-.940l-.360-2.540a.484.484 0 0 0-.480-.410h-3.840c-.240 0-.430.170-.470.410l-.360 2.540c-.590.240-1.130.570-1.620.940l-2.390-.960c-.220-.080-.470 0-.590.220L2.740 8.870c-.120.210-.080.470.120.610l2.030 1.580c-.050.300-.090.630-.090.940s.020.640.070.940l-2.030 1.580a.490.490 0 0 0-.120.610l1.920 3.320c.120.220.370.290.590.220l2.390-.960c.500.380 1.030.700 1.620.940l.360 2.540c.050.240.240.410.480.410h3.840c.240 0 .440-.170.470-.410l.360-2.540c.590-.240 1.130-.560 1.620-.940l2.390.960c.220.080.470 0 .590-.220l1.920-3.320c.120-.220.070-.470-.120-.610l-2.010-1.580zM12 15.600c-1.980 0-3.600-1.620-3.600-3.600s1.620-3.600 3.600-3.600 3.600 1.620 3.600 3.600-1.620 3.600-3.600 3.600z"/></svg><svg style="left:1311px;top:9px" width="16" height="12" viewBox="0 0 16 12"><path d="M0.500 1.900h15.300M0.500 6h15.300M0.500 10.100h15.300" stroke="#444" stroke-width="1.600" fill="none"/></svg><div class="hdr"><span style="left:24px">Name</span><span style="left:172px">Ferrule ROC, mm</span><span style="left:337px">Fiber Height, nm</span><span style="left:502px">Fiber Planar Height, nm</span><span style="left:666px">Apex Offset, µm</span><span style="left:831px">Apex Offset Bearing, °</span><span style="left:995px">Ferrule Ra, nm</span><span style="left:1159px">Fiber Ra, nm</span></div><div class="vsep" style="left:168px"></div><div class="vsep" style="left:333px"></div><div class="vsep" style="left:498px"></div><div class="vsep" style="left:662px"></div><div class="vsep" style="left:827px"></div><div class="vsep" style="left:991px"></div><div class="vsep" style="left:1155px"></div><div class="row rb" style="top:40px"><i></i><span style="left:23px">Result1327</span><span style="left:168px">10.94</span><span style="left:333px">24.0</span><span style="left:498px">231.1</span><span style="left:662px">36.20</span><span style="left:827px">313.679</span><span style="left:991px">1.14</span><span style="left:1155px">0.86</span></div><div class="row ra" style="top:65px"><i></i><span style="left:23px">Result1328</span><span style="left:168px">10.94</span><span style="left:333px">24.0</span><span style="left:498px">231.1</span><span style="left:662px">36.20</span><span style="left:827px">313.680</span><span style="left:991px">1.14</span><span style="left:1155px">0.86</span></div><div class="row rb" style="top:90px"><i></i><span style="left:23px">Result1329</span><span style="left:168px">10.94</span><span style="left:333px">24.0</span><span style="left:498px">231.1</span><span style="left:662px">36.20</span><span style="left:827px">313.686</span><span style="left:991px">1.14</span><span style="left:1155px">0.86</span></div><div class="row ra" style="top:115px"><i></i><span style="left:23px">Result1330</span><span style="left:168px">10.94</span><span style="left:333px">24.0</span><span style="left:498px">231.1</span><span style="left:662px">36.20</span><span style="left:827px">313.686</span><span style="left:991px">1.14</span><span style="left:1155px">0.85</span></div><div class="row rb" style="top:140px"><i></i><span style="left:23px">Result1331</span><span style="left:168px">10.94</span><span style="left:333px">24.0</span><span style="left:498px">231.1</span><span style="left:662px">36.19</span><span style="left:827px">313.686</span><span style="left:991px">1.14</span><span style="left:1155px">0.86</span></div><div class="row ra" style="top:165px"><i></i><span style="left:23px">Result1332</span><span style="left:168px">10.94</span><span style="left:333px">24.0</span><span style="left:498px">231.1</span><span style="left:662px">36.20</span><span style="left:827px">313.692</span><span style="left:991px">1.14</span><span style="left:1155px">0.87</span></div><div class="row rb" style="top:190px"><i></i><span style="left:23px">Result1333</span><span style="left:168px">10.94</span><span style="left:333px">24.0</span><span style="left:498px">231.1</span><span style="left:662px">36.19</span><span style="left:827px">313.687</span><span style="left:991px">1.14</span><span style="left:1155px">0.87</span></div><div class="row rs" style="top:215px"><i></i><span style="left:23px">Result1334</span><span style="left:168px">10.94</span><span style="left:333px">24.0</span><span style="left:498px">231.1</span><span style="left:662px">36.20</span><span style="left:827px">313.688</span><span style="left:991px">1.14</span><span style="left:1155px">0.87</span></div><svg style="left:1322px;top:32px" width="8" height="5" viewBox="0 0 8 5"><path d="M0 5h8l-4-5z" fill="#444"/></svg><div class="abs" style="left:1322px;top:95px;width:11px;height:135px;background:#cdcdcd"></div><svg style="left:1322px;top:233px" width="8" height="5" viewBox="0 0 8 5"><path d="M0 0h8l-4 5z" fill="#444"/></svg><div class="drow" style="top:240px"><span style="right:1180px;letter-spacing:-0.8px;font-size:10px">STDEV</span><b style="left:169px">0.00</b><b style="left:334px">0.0</b><b style="left:499px">0.0</b><b style="left:664px">0.01</b><b style="left:829px">0.004</b><b style="left:994px">0.00</b><b style="left:1159px">0.01</b></div><div class="drow" style="top:265px"><div class="abs" style="left:0;top:0;width:1320px;height:25px;background:#333d45"></div><span style="right:1180px;letter-spacing:-0.4px;font-size:10.5px">Average</span><b style="left:169px">10.94</b><b style="left:334px">24.0</b><b style="left:499px">231.1</b><b style="left:664px">36.20</b><b style="left:829px">313.685</b><b style="left:994px">1.14</b><b style="left:1159px">0.86</b></div><div class="dsep" style="left:165px"></div><div class="dsep" style="left:330px"></div><div class="dsep" style="left:495px"></div><div class="dsep" style="left:660px"></div><div class="dsep" style="left:825px"></div><div class="dsep" style="left:990px"></div><div class="dsep" style="left:1155px"></div><svg style="left:1322px;top:243px" width="8" height="4" viewBox="0 0 8 4"><path d="M0 4h8l-4-4z" fill="#222"/></svg><svg style="left:1322px;top:283px" width="8" height="4" viewBox="0 0 8 4"><path d="M0 0h8l-4 4z" fill="#222"/></svg></div>
<div id="bottombar"><svg style="left:19.900px;top:9.100px" width="21" height="21" viewBox="0 0 21 21" fill="none" stroke="#eee" stroke-width="1.300"><circle cx="10.500" cy="10.500" r="9.200" stroke-width="1.800"/><path d="M12.00 7.90L19.33 7.90"/><path d="M13.50 10.50L17.16 16.84"/><path d="M12.00 13.10L8.34 19.44"/><path d="M9.00 13.10L1.67 13.10"/><path d="M7.50 10.50L3.84 4.16"/><path d="M9.00 7.90L12.66 1.56"/><polygon points="11.80,8.25 13.10,10.50 11.80,12.75 9.20,12.75 7.90,10.50 9.20,8.25" fill="#eee" stroke="none"/></svg><svg style="left:1253px;top:10px" width="21" height="21" viewBox="0 0 21 21"><circle cx="10.300" cy="10.100" r="9.300" fill="#3b8ed8" stroke="#eee" stroke-width="1.500"/><text x="10.300" y="14.800" text-anchor="middle" font-family="Liberation Sans, sans-serif" font-weight="bold" font-size="13" fill="#e8fbff">Σ</text></svg><svg style="left:1294px;top:10px" width="21" height="21" viewBox="0 0 21 21"><circle cx="10" cy="10.100" r="9.300" fill="none" stroke="#eee" stroke-width="1.500"/><g transform="translate(3.04 3.14) scale(0.58)"><path fill="#eee" d="M19.140 12.940c.040-.300.060-.610.060-.940s-.020-.640-.070-.940l2.030-1.580a.490.490 0 0 0 .120-.610l-1.920-3.320a.488.488 0 0 0-.590-.220l-2.390.960c-.500-.380-1.030-.700-1.620-.940l-.360-2.540a.484.484 0 0 0-.480-.410h-3.840c-.240 0-.430.170-.470.410l-.360 2.540c-.590.240-1.130.570-1.620.940l-2.390-.960c-.220-.080-.470 0-.590.220L2.740 8.870c-.120.210-.080.470.120.610l2.030 1.580c-.050.300-.090.630-.090.940s.020.640.070.940l-2.030 1.580a.490.490 0 0 0-.120.610l1.920 3.320c.120.220.370.290.590.220l2.390-.960c.500.380 1.030.700 1.620.940l.360 2.540c.050.240.240.410.480.410h3.840c.240 0 .440-.170.470-.410l.360-2.540c.590-.240 1.130-.560 1.620-.940l2.390.960c.220.080.470 0 .590-.220l1.920-3.320c.120-.220.070-.470-.120-.610l-2.010-1.580zM12 15.600c-1.980 0-3.600-1.620-3.600-3.600s1.620-3.600 3.600-3.600 3.600 1.620 3.600 3.600-1.620 3.600-3.600 3.600z"/></g></svg></div>
<div id="vsplit2"><div class="abs" style="left:0;top:446px;width:3px;height:14px;background:#8a8a8a"></div></div>
<div id="right"><svg style="left:31px;top:10px" width="19" height="19" viewBox="0 0 24 24"><path fill="#555" d="M12 .8l3.300 3.300h4.700v4.700l3.300 3.200-3.300 3.300v4.700h-4.700L12 23.200 8.700 20H4v-4.700L.7 12 4 8.800V4.100h4.700z"/><text x="12" y="16.500" text-anchor="middle" font-family="Liberation Sans, sans-serif" font-weight="bold" font-size="12" fill="#f5f5f5">A</text></svg><div class="t" id="autotune" style="left:54px;top:13px;font-size:13px;color:#4a90c8;letter-spacing:-0.300px">Auto Tune Image</div><div class="abs" style="left:30px;top:39px;width:163px;height:30px;background:#448aca;border-radius:2px"></div><div class="t" id="measure" style="left:30px;top:48.600px;width:163px;text-align:center;font-size:12px;font-weight:bold;color:#fff;letter-spacing:-0.2px">MEASURE</div><div class="t" id="ready" style="left:30px;top:86px;font-size:10.500px;color:#777;letter-spacing:-0.42px">Ready to measure</div><div class="lbl" style="top:135px">Name:</div><div class="val" style="top:135px;color:#4a90c8">Result1335</div><div class="lbl" style="top:165px">Folder:</div><div class="val" style="top:165px;color:#3d84b0">My Results</div><div class="lbl" style="top:196px">Customer:</div><div class="lbl" style="top:223px">Connector ID:</div><svg style="left:200px;top:164px" width="16" height="13" viewBox="0 0 16 13"><path d="M0.800 2.200C0.800 1.400 1.400 0.800 2.200 0.800H6L7.500 2.500H13.800C14.600 2.500 15.200 3.100 15.200 3.900V10.800C15.200 11.600 14.600 12.200 13.800 12.200H2.200C1.400 12.200 0.800 11.600 0.800 10.800z" fill="none" stroke="#444" stroke-width="1.400"/></svg><div class="abs" style="left:0;top:521px;width:223px;height:3px;background:#c8c8c8"></div><div class="abs" style="left:105px;top:521px;width:14px;height:3px;background:#8a8a8a"></div><div class="abs" style="left:0;top:524px;width:223px;height:29px;background:#e1e1e1"></div><div class="abs" style="left:20px;top:532px;width:37px;height:15px;border-radius:8px;background:#448aca"></div><div class="abs" style="left:44.600px;top:534.800px;width:9.400px;height:9.400px;border-radius:5px;background:#fff"></div><div class="t" id="express" style="left:62px;top:533px;font-size:13px;color:#444;letter-spacing:-0.55px">Express Mode</div><svg style="left:169px;top:532px" width="16" height="15" viewBox="0 0 16 15" fill="none" stroke="#444" stroke-width="1.500"><path d="M6.500 1.200H1.200V13.800H13.800V8.500"/><path d="M9 0.900H14.800V6.700M14.600 1.100 6.200 9.500"/></svg><svg style="left:200px;top:534px" width="16" height="12" viewBox="0 0 16 12"><path d="M0 1.300h16M0 5.800h16M0 10.300h16" stroke="#444" stroke-width="1.500" fill="none"/></svg><div class="abs" style="left:23px;top:707px;width:200px;height:200px;background:#a3d4a7;clip-path:polygon(100% 0,100% 100%,0 100%)"></div><div class="t" id="pass" style="left:31px;top:576px;font-size:19.500px;color:#5cb870;letter-spacing:-1.500px;z-index:2">PASS</div><div class="rl" style="top:606.5px">Name:</div><div class="rv" style="top:606.5px">Result1334</div><div class="rl" style="top:627.4px">Scan quality:</div><div class="rv" style="top:627.4px">Ok</div><div class="rl" style="top:648.2px">Ferrule ROC, mm:</div><div class="rv" style="top:648.2px">10.94</div><div class="rl" style="top:669.1px">Fiber Height, nm:</div><div class="rv" style="top:669.1px">24.0</div><div class="rl" style="top:689.9px">Fiber Planar Height, nm:</div><div class="rv" style="top:689.9px">231.1</div><div class="rl" style="top:710.8px">Apex Offset, µm:</div><div class="rv" style="top:710.8px">36.20</div><div class="rl" style="top:731.7px">Apex Offset Bearing, °:</div><div class="rv" style="top:731.7px">313.688</div><div class="rl" style="top:752.5px">Polish Angle Error, °:</div><div class="rv" style="top:752.5px">0.137</div><div class="rl" style="top:773.4px">Key Angle Error, °:</div><div class="rv" style="top:773.4px">-0.131</div><div class="rl" style="top:794.2px">Ferrule Ra, nm:</div><div class="rv" style="top:794.2px">1.14</div><div class="rl" style="top:815.1px">Fiber Ra, nm:</div><div class="rv" style="top:815.1px">0.87</div></div>
</body>
</html>
